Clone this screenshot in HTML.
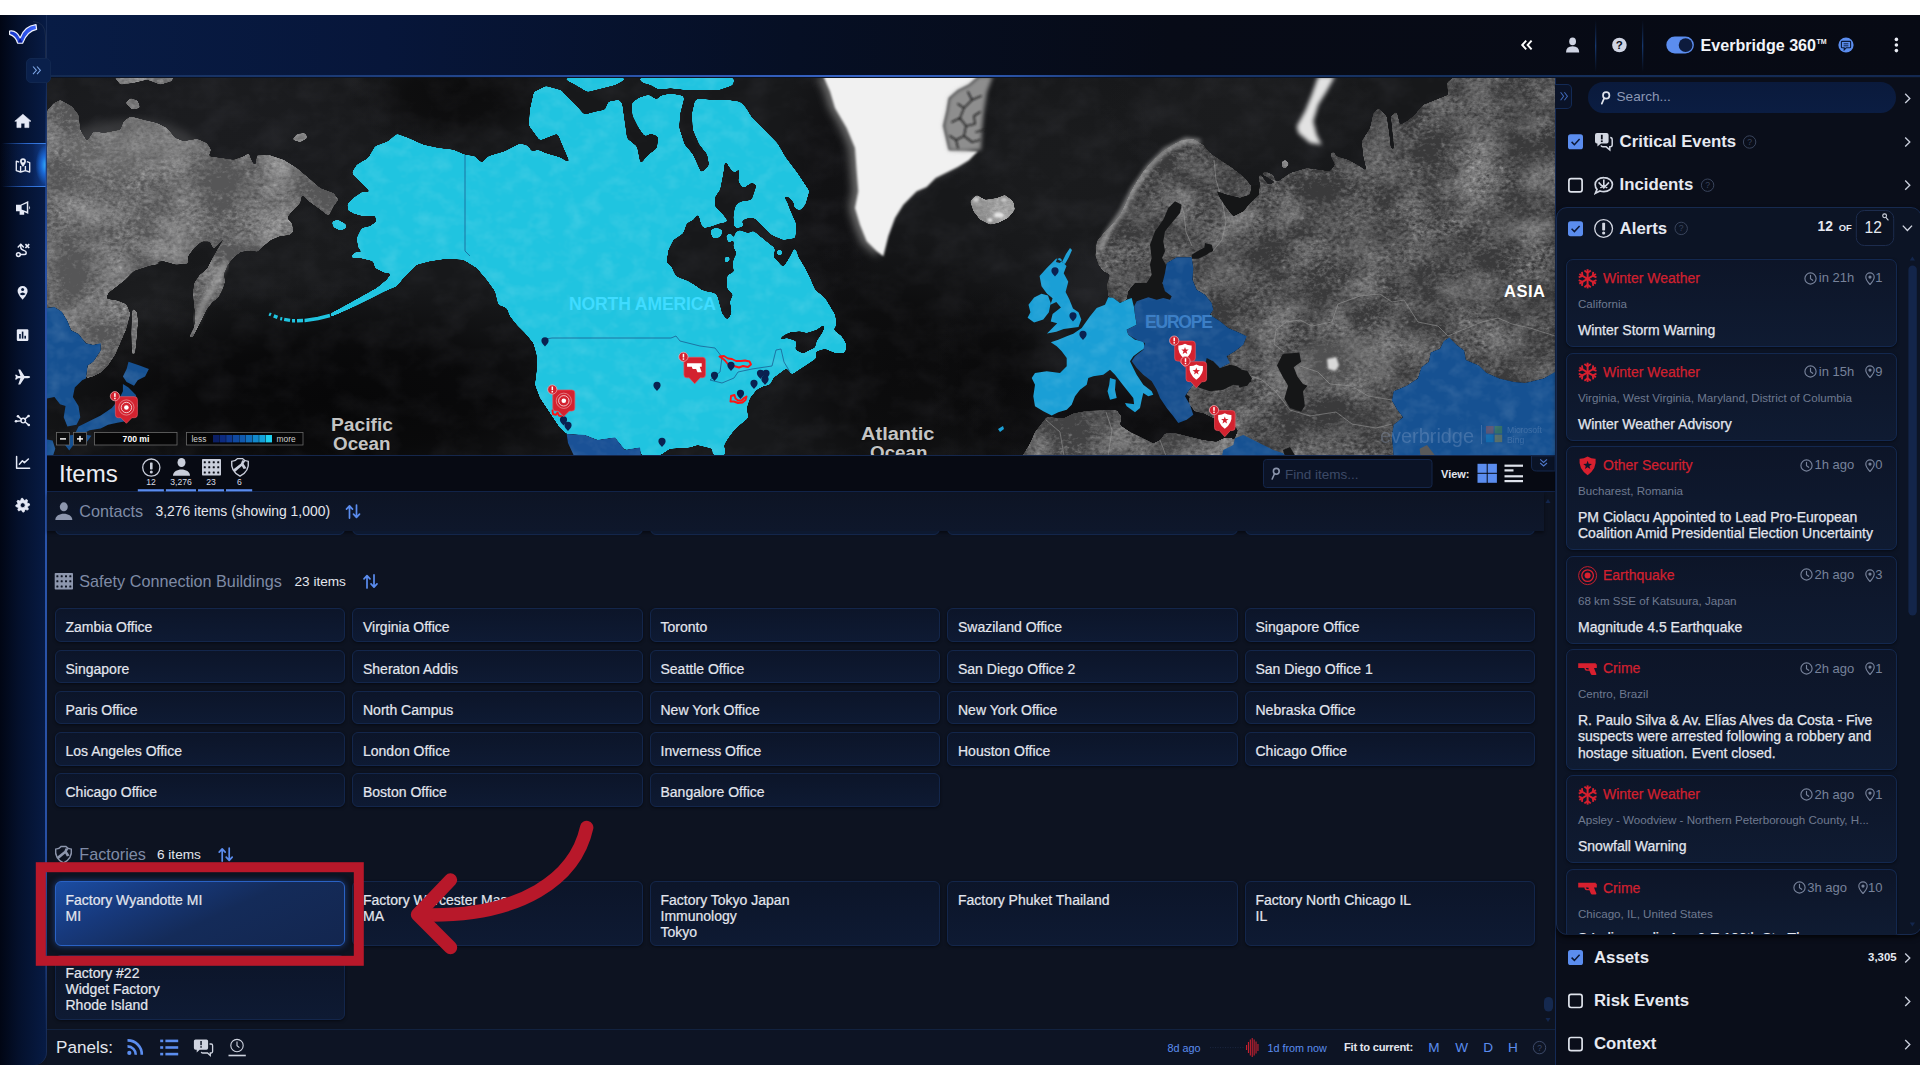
<!DOCTYPE html><html><head><meta charset="utf-8"><title>Everbridge 360</title><style>
*{box-sizing:border-box;margin:0;padding:0}
html,body{width:1920px;height:1080px;overflow:hidden;background:#fff}
body{font-family:"Liberation Sans",sans-serif;color:#e3e6ee;position:relative}
.abs{position:absolute}
#app{position:absolute;left:0;top:15px;width:1920px;height:1050px;background:#0d1321;overflow:hidden}
#side{position:absolute;left:0;top:0;width:46.5px;height:1050px;background:linear-gradient(90deg,#010614 0%,#04102b 40%,#071b44 100%);border-right:1px solid #182c55;border-bottom-right-radius:13px}
#side:after{content:'';position:absolute;right:-1px;top:70px;width:1.3px;height:950px;background:linear-gradient(180deg,rgba(40,80,170,0) 0%,#2850a4 18%,#2a54aa 50%,#2850a4 80%,rgba(40,80,170,0) 100%)}
#hdr{position:absolute;left:46px;top:0;width:1874px;height:62px;background:linear-gradient(90deg,#081c45 0%,#07163a 18%,#060f24 40%,#070b17 60%,#070a14 100%);border-bottom:none}
#map{position:absolute;left:47px;top:63px;width:1508px;height:377px;background:#161719;overflow:hidden}
#items{position:absolute;left:47px;top:440px;width:1508px;height:610px;background:#0d1321}
#rp{position:absolute;left:1555px;top:63px;width:365px;height:987px;background:#0a0e1a;border-left:1px solid #142a55}
.card{position:absolute;height:33.5px;width:290.5px;border:1px solid #13264b;border-radius:6px;background:linear-gradient(180deg,#0c1529 0%,#0e1a33 100%);box-shadow:0 1px 3px rgba(0,0,0,.5);font-size:14px;color:#e3e6ee;-webkit-text-stroke:.2px #e3e6ee;padding:2px 0 0 10px;line-height:33px;white-space:nowrap;overflow:hidden}
.card.f{height:65px;line-height:16px;padding-top:10.5px}
.sec{position:absolute;font-size:15.6px;color:#7f8ba6;white-space:nowrap}
.cnt{position:absolute;font-size:13.6px;color:#e3e6ee;white-space:nowrap}
.acard{position:absolute;left:10px;width:331px;border:1px solid #13284f;border-radius:7px;background:linear-gradient(180deg,#0d1528 0%,#0f1b32 100%);box-shadow:0 1px 3px rgba(0,0,0,.5)}
.acard .t{position:absolute;left:36px;top:10px;font-size:14px;color:#d0202f;-webkit-text-stroke:.25px #d0202f;white-space:nowrap}
.acard .m{position:absolute;right:13.5px;top:10.3px;font-size:13px;color:#77829a;white-space:nowrap}
.acard .l{position:absolute;left:11px;top:37px;font-size:11.6px;color:#6f7a90;white-space:nowrap}
.acard .d{position:absolute;left:11px;top:61.9px;font-size:14px;color:#e3e6ee;-webkit-text-stroke:.25px #e3e6ee;line-height:16.3px;width:310px}
.acard svg.ic{position:absolute;left:10px;top:9px}
.rrow{position:absolute;left:0;width:365px;height:30px}
.rrow .lab{position:absolute;left:64px;top:3px;font-size:17px;font-weight:bold;color:#e9ecf3;white-space:nowrap;letter-spacing:-0.1px}
.cb{position:absolute;left:12px;top:7px;width:15px;height:15px;border-radius:3px}
.cb.on{background:#5b8def}
.cb.off{border:2px solid #e3e6ee}
</style></head><body>
<div id="app">
<div id="map"><svg class="abs" style="left:0;top:0" width="1508" height="377" viewBox="47 78 1508 377">
<defs>
<filter id="fland" x="0" y="0" width="100%" height="100%" color-interpolation-filters="sRGB">
 <feGaussianBlur in="SourceGraphic" stdDeviation="1.3" result="sb"/>
 <feComponentTransfer in="sb" result="src"><feFuncA type="linear" slope="7" intercept="-3"/></feComponentTransfer>
 <feTurbulence type="fractalNoise" baseFrequency="0.02 0.025" numOctaves="3" seed="7" result="n1"/>
 <feTurbulence type="fractalNoise" baseFrequency="0.22 0.3" numOctaves="3" seed="4" result="n2"/>
 <feComposite in="n1" in2="n2" operator="arithmetic" k1="0" k2="0.6" k3="0.4" k4="0" result="n"/>
 <feColorMatrix in="n" type="matrix" values="0.75 0.75 0 0 -0.62  0.75 0.75 0 0 -0.62  0.75 0.75 0 0 -0.62  0 0 0 0 1" result="g"/>
 <feComposite in="g" in2="src" operator="in" result="gc"/>
 <feBlend in="gc" in2="src" mode="screen" result="b"/>
 <feComposite in="b" in2="src" operator="in"/>
</filter>
<filter id="fcy" x="0" y="0" width="100%" height="100%" color-interpolation-filters="sRGB">
 <feTurbulence type="fractalNoise" baseFrequency="0.06 0.07" numOctaves="3" seed="3" result="n"/>
 <feColorMatrix in="n" type="matrix" values="0 0 0 0 1  0 0 0 0 1  0 0 0 0 1  .15 .15 0 0 -0.13" result="g"/>
 <feComposite in="g" in2="SourceGraphic" operator="in" result="gc"/>
 <feMerge><feMergeNode in="SourceGraphic"/><feMergeNode in="gc"/></feMerge>
</filter>
<filter id="focean" x="0" y="0" width="100%" height="100%" color-interpolation-filters="sRGB">
 <feTurbulence type="fractalNoise" baseFrequency="0.03 0.04" numOctaves="4" seed="11" result="n"/>
 <feColorMatrix in="n" type="matrix" values="0 0 0 0 .6  0 0 0 0 .6  0 0 0 0 .66  .1 .1 0 0 -0.085"/>
</filter>
<filter id="goo" x="-2%" y="-2%" width="104%" height="104%" color-interpolation-filters="sRGB">
 <feGaussianBlur in="SourceGraphic" stdDeviation="1.5" result="bl"/>
 <feColorMatrix in="bl" type="matrix" values="1 0 0 0 0  0 1 0 0 0  0 0 1 0 0  0 0 0 14 -6.5" result="th"/>
 <feFlood flood-color="#20c4e0"/><feComposite in2="th" operator="in"/>
</filter>
<filter id="b1"><feGaussianBlur stdDeviation="1"/></filter>
<filter id="b2"><feGaussianBlur stdDeviation="2.2"/></filter>
<filter id="b4"><feGaussianBlur stdDeviation="4"/></filter>
<filter id="b12" x="-50%" y="-50%" width="200%" height="200%"><feGaussianBlur stdDeviation="14"/></filter>
<filter id="b25" x="-100%" y="-100%" width="300%" height="300%"><feGaussianBlur stdDeviation="22"/></filter>
</defs>
<rect x="47" y="78" width="1508" height="377" fill="#17181a"/>
<defs>
<radialGradient id="og0"><stop offset="0" stop-color="#1b1c1f" stop-opacity="1"/><stop offset=".45" stop-color="#1b1c1f" stop-opacity=".85"/><stop offset=".75" stop-color="#1b1c1f" stop-opacity=".35"/><stop offset="1" stop-color="#1b1c1f" stop-opacity="0"/></radialGradient>
<radialGradient id="og1"><stop offset="0" stop-color="#1a1b1d" stop-opacity="1"/><stop offset=".45" stop-color="#1a1b1d" stop-opacity=".85"/><stop offset=".75" stop-color="#1a1b1d" stop-opacity=".35"/><stop offset="1" stop-color="#1a1b1d" stop-opacity="0"/></radialGradient>
<radialGradient id="og2"><stop offset="0" stop-color="#1c1d1f" stop-opacity="1"/><stop offset=".45" stop-color="#1c1d1f" stop-opacity=".85"/><stop offset=".75" stop-color="#1c1d1f" stop-opacity=".35"/><stop offset="1" stop-color="#1c1d1f" stop-opacity="0"/></radialGradient>
<radialGradient id="og3"><stop offset="0" stop-color="#070708" stop-opacity="1"/><stop offset=".45" stop-color="#070708" stop-opacity=".85"/><stop offset=".75" stop-color="#070708" stop-opacity=".35"/><stop offset="1" stop-color="#070708" stop-opacity="0"/></radialGradient>
<radialGradient id="og4"><stop offset="0" stop-color="#0c0c0d" stop-opacity="1"/><stop offset=".45" stop-color="#0c0c0d" stop-opacity=".85"/><stop offset=".75" stop-color="#0c0c0d" stop-opacity=".35"/><stop offset="1" stop-color="#0c0c0d" stop-opacity="0"/></radialGradient>
<radialGradient id="og5"><stop offset="0" stop-color="#111113" stop-opacity="1"/><stop offset=".45" stop-color="#111113" stop-opacity=".85"/><stop offset=".75" stop-color="#111113" stop-opacity=".35"/><stop offset="1" stop-color="#111113" stop-opacity="0"/></radialGradient>
<radialGradient id="og6"><stop offset="0" stop-color="#0b0b0c" stop-opacity="1"/><stop offset=".45" stop-color="#0b0b0c" stop-opacity=".85"/><stop offset=".75" stop-color="#0b0b0c" stop-opacity=".35"/><stop offset="1" stop-color="#0b0b0c" stop-opacity="0"/></radialGradient>
<radialGradient id="og7"><stop offset="0" stop-color="#0a0a0b" stop-opacity="1"/><stop offset=".45" stop-color="#0a0a0b" stop-opacity=".85"/><stop offset=".75" stop-color="#0a0a0b" stop-opacity=".35"/><stop offset="1" stop-color="#0a0a0b" stop-opacity="0"/></radialGradient>
<radialGradient id="og8"><stop offset="0" stop-color="#1a1b1d" stop-opacity="1"/><stop offset=".45" stop-color="#1a1b1d" stop-opacity=".85"/><stop offset=".75" stop-color="#1a1b1d" stop-opacity=".35"/><stop offset="1" stop-color="#1a1b1d" stop-opacity="0"/></radialGradient>
<radialGradient id="og9"><stop offset="0" stop-color="#1b1c1e" stop-opacity="1"/><stop offset=".45" stop-color="#1b1c1e" stop-opacity=".85"/><stop offset=".75" stop-color="#1b1c1e" stop-opacity=".35"/><stop offset="1" stop-color="#1b1c1e" stop-opacity="0"/></radialGradient>
<radialGradient id="og10"><stop offset="0" stop-color="#202124" stop-opacity="1"/><stop offset=".45" stop-color="#202124" stop-opacity=".85"/><stop offset=".75" stop-color="#202124" stop-opacity=".35"/><stop offset="1" stop-color="#202124" stop-opacity="0"/></radialGradient>
<radialGradient id="og11"><stop offset="0" stop-color="#0d0d0f" stop-opacity="1"/><stop offset=".45" stop-color="#0d0d0f" stop-opacity=".85"/><stop offset=".75" stop-color="#0d0d0f" stop-opacity=".35"/><stop offset="1" stop-color="#0d0d0f" stop-opacity="0"/></radialGradient>
</defs>
<ellipse cx="190" cy="130" rx="264" ry="108" fill="url(#og0)"/>
<ellipse cx="280" cy="250" rx="93" ry="78" fill="url(#og1)"/>
<ellipse cx="150" cy="315" rx="70" ry="70" fill="url(#og2)"/>
<ellipse cx="330" cy="400" rx="356" ry="116" fill="url(#og3)"/>
<ellipse cx="455" cy="95" rx="108" ry="54" fill="url(#og4)"/>
<ellipse cx="830" cy="200" rx="54" ry="170" fill="url(#og5)"/>
<ellipse cx="900" cy="370" rx="147" ry="140" fill="url(#og6)"/>
<ellipse cx="1000" cy="390" rx="70" ry="108" fill="url(#og7)"/>
<ellipse cx="1060" cy="170" rx="108" ry="108" fill="url(#og8)"/>
<ellipse cx="1240" cy="115" rx="140" ry="70" fill="url(#og9)"/>
<ellipse cx="1090" cy="285" rx="34" ry="43" fill="url(#og10)"/>
<ellipse cx="1130" cy="420" rx="186" ry="46" fill="url(#og11)"/>
<rect x="47" y="78" width="1508" height="377" filter="url(#focean)" fill="#000" opacity="1"/>
<path d="M823.3 76.3 L830.0 91.3 L835.0 108.0 L846.7 128.0 L855.0 148.0 L856.7 171.3 L858.3 191.3 L855.0 208.0 L860.0 224.7 L866.7 241.3 L876.7 251.3 L883.3 256.3 L888.3 236.3 L895.0 218.0 L903.3 204.7 L916.7 191.3 L926.7 186.9 L935.6 178.0 L946.7 172.4 L957.8 166.9 L968.9 160.2 L977.8 151.3 L964.4 150.2 L948.9 150.2 L946.7 140.2 L943.3 125.8 L946.7 111.3 L948.9 98.0 L957.8 90.2 L968.9 84.7 L979.0 76.0 Z" fill="#6a6a6a" filter="url(#b4)" transform="translate(-6 0)"/>
<path d="M823.3 76.3 L830.0 91.3 L835.0 108.0 L846.7 128.0 L855.0 148.0 L856.7 171.3 L858.3 191.3 L855.0 208.0 L860.0 224.7 L866.7 241.3 L876.7 251.3 L883.3 256.3 L888.3 236.3 L895.0 218.0 L903.3 204.7 L916.7 191.3 L926.7 186.9 L935.6 178.0 L946.7 172.4 L957.8 166.9 L968.9 160.2 L977.8 151.3 L964.4 150.2 L948.9 150.2 L946.7 140.2 L943.3 125.8 L946.7 111.3 L948.9 98.0 L957.8 90.2 L968.9 84.7 L979.0 76.0 Z" fill="#f1f1f1" filter="url(#b1)"/>
<path d="M948.9 98.0 L957.8 90.2 L968.9 84.7 L979.0 76.0 L993.0 76.0 L987.0 92.0 L984.0 110.0 L982.0 130.0 L981.0 150.0 L964.0 151.0 L948.9 150.2 L946.7 140.2 L943.3 125.8 L946.7 111.3 Z" fill="#8e8e8e" filter="url(#b2)"/>
<g stroke="#151516" stroke-width="1.7" fill="none" filter="url(#b1)" opacity=".85" stroke-linecap="round"><path d="M981 96 L972 100 L964 108 L958 104 M972 100 L968 92 M964 108 L960 118 L952 122 M960 118 L966 126 L975 124 M966 126 L964 136 L956 140 L950 136 M964 136 L972 142 L980 140 M956 140 L958 148 M980 112 L974 116 L975 124 M984 130 L976 132"/></g>
<g filter="url(#fland)">
<path d="M1095.0 258.8 L1096.7 241.3 L1105.0 231.3 L1113.3 223.0 L1120.0 214.7 L1125.0 204.7 L1130.0 193.0 L1136.7 181.3 L1143.3 171.3 L1151.7 161.3 L1160.0 153.0 L1170.0 146.3 L1181.7 139.7 L1193.3 138.8 L1203.3 144.7 L1210.0 153.0 L1220.0 159.7 L1230.0 166.3 L1243.3 176.3 L1251.7 186.3 L1250.0 194.7 L1240.0 198.0 L1226.7 194.7 L1216.7 191.3 L1220.0 198.0 L1226.7 208.0 L1233.3 216.3 L1243.3 211.3 L1250.0 203.0 L1258.3 194.7 L1260.0 184.7 L1258.3 176.3 L1265.0 171.3 L1273.3 174.7 L1276.7 183.0 L1256.7 171.3 L1263.3 178.0 L1268.3 184.7 L1278.3 181.3 L1290.0 173.0 L1306.7 168.0 L1330.0 171.3 L1335.0 164.7 L1330.0 154.7 L1333.3 151.3 L1336.7 156.3 L1348.3 159.7 L1360.0 166.3 L1366.7 171.3 L1363.3 156.3 L1361.7 141.3 L1370.0 128.0 L1373.3 113.0 L1378.3 108.0 L1386.7 116.3 L1389.2 133.0 L1390.8 148.0 L1394.2 149.7 L1392.5 133.0 L1390.8 116.3 L1396.7 111.3 L1400.0 124.7 L1406.7 121.3 L1415.0 114.7 L1420.0 108.0 L1423.3 104.7 L1448.3 94.7 L1446.7 83.0 L1454.2 76.3 L1556.7 76.3 L1556.0 76.0 L1556.0 372.0 L1543.7 378.4 L1525.2 383.0 L1514.1 382.1 L1499.3 378.4 L1486.3 372.8 L1478.9 365.4 L1465.9 359.9 L1464.1 350.6 L1456.7 345.0 L1449.3 337.6 L1443.7 341.3 L1440.0 348.7 L1430.7 352.4 L1428.9 361.7 L1421.5 367.3 L1417.8 378.4 L1406.7 385.8 L1393.7 391.3 L1391.9 400.6 L1397.4 409.9 L1403.0 417.3 L1393.7 424.7 L1391.9 435.8 L1393.7 457.1 L1300.0 457.0 L1236.0 457.0 L1234.0 440.0 L1238.0 430.0 L1232.0 424.0 L1222.0 420.0 L1213.3 418.3 L1203.3 413.3 L1195.0 411.7 L1188.3 403.3 L1190.0 395.0 L1185.0 396.3 L1188.3 391.3 L1193.3 384.7 L1201.7 374.7 L1205.0 364.7 L1206.7 358.0 L1213.3 361.3 L1220.0 368.0 L1230.0 363.0 L1226.7 356.3 L1235.0 351.3 L1243.3 344.7 L1246.7 336.3 L1240.0 333.0 L1228.3 328.0 L1220.0 321.3 L1210.0 314.7 L1213.3 309.7 L1211.7 303.0 L1205.0 294.7 L1196.7 289.7 L1192.5 279.7 L1193.3 268.0 L1191.7 257.2 L1176.7 257.2 L1166.7 263.0 L1165.0 273.0 L1162.5 283.0 L1165.0 291.3 L1160.0 296.3 L1151.7 293.8 L1146.7 283.0 L1135.0 283.0 L1128.3 291.3 L1126.7 299.7 L1120.0 303.0 L1113.3 298.0 L1108.3 297.2 L1106.7 284.7 L1110.0 274.7 L1103.3 271.3 L1098.3 264.7 L1095.8 256.3 Z" fill="#3a3a3b"/>
<path d="M45.3 113.0 L53.7 103.0 L60.3 99.7 L72.0 106.3 L78.7 114.7 L80.3 129.7 L87.0 141.3 L93.7 131.3 L103.7 133.0 L120.3 129.7 L123.7 121.3 L130.3 116.3 L143.7 119.7 L157.0 123.0 L167.0 128.0 L175.3 138.0 L183.7 141.3 L197.0 138.8 L207.0 143.0 L211.2 149.7 L208.7 156.3 L222.0 158.0 L233.7 159.7 L243.7 156.3 L248.7 153.0 L252.0 161.3 L255.3 166.3 L257.0 154.7 L268.7 154.7 L283.7 159.7 L297.0 168.0 L308.7 178.0 L320.3 188.0 L333.7 193.0 L338.7 199.7 L333.7 206.3 L328.7 216.3 L320.3 209.7 L308.7 201.3 L302.0 194.7 L300.3 203.0 L292.0 211.3 L287.0 218.0 L292.0 223.0 L293.7 233.0 L293.9 231.1 L290.0 235.0 L279.7 236.3 L270.6 240.2 L262.8 246.7 L257.6 251.9 L251.1 250.6 L240.8 251.9 L234.3 257.1 L227.8 264.8 L223.9 273.9 L225.2 281.7 L222.6 289.5 L218.7 297.2 L212.2 302.4 L207.1 308.9 L201.9 319.3 L192.8 337.4 L188.9 337.4 L194.1 327.1 L195.4 316.7 L194.1 306.3 L192.8 293.4 L194.1 283.0 L199.3 275.2 L207.1 268.7 L210.9 260.9 L217.4 249.3 L222.6 241.5 L227.8 233.7 L223.9 237.6 L217.4 245.4 L213.5 249.3 L209.6 241.5 L201.9 241.5 L194.1 248.0 L187.6 257.1 L188.9 263.5 L175.9 264.8 L163.0 260.9 L150.0 262.2 L165.5 263.6 L150.7 265.4 L134.0 271.0 L124.8 280.2 L108.1 293.2 L106.3 298.7 L117.4 300.6 L126.6 304.3 L130.3 313.6 L126.6 328.4 L121.1 341.3 L115.5 354.3 L108.1 365.4 L100.7 372.8 L93.3 376.5 L85.9 378.4 L87.7 365.4 L93.3 361.7 L100.7 350.6 L100.7 343.2 L93.3 345.0 L85.9 343.2 L78.5 333.9 L71.1 330.2 L67.4 321.0 L61.8 311.7 L54.4 307.1 L45.1 308.0 Z" fill="#565657"/>
<path d="M1021.7 457.0 L1030.0 443.3 L1035.0 431.7 L1046.7 416.7 L1063.3 418.3 L1073.3 413.3 L1086.7 410.8 L1106.7 410.0 L1116.7 410.0 L1121.7 416.7 L1120.0 425.0 L1130.0 431.7 L1143.3 438.3 L1153.3 443.3 L1160.0 440.0 L1165.0 433.3 L1176.7 433.3 L1190.0 436.7 L1203.3 440.0 L1216.7 441.7 L1223.3 438.3 L1232.0 437.5 L1236.0 445.0 L1238.0 457.0 Z M1236.0 457.0 L1237.0 456.0 L1238.0 457.0 Z" fill="#424243"/>
<path d="M132.6 308.0 L136.8 311.7 L138.1 321.0 L136.8 337.6 L135.0 354.3 L131.8 354.3 L131.3 332.1 L131.8 315.4 Z M113.7 76.3 L120.3 84.7 L133.7 83.0 L147.0 79.7 L160.3 84.7 L172.0 81.3 L173.7 76.3 Z M125.3 103.0 L130.3 98.0 L137.8 100.5 L140.3 108.0 L132.0 109.7 Z M292.0 139.7 L297.0 133.8 L305.3 133.0 L307.8 138.0 L300.3 142.2 Z M1281.7 161.3 L1285.8 159.7 L1289.2 163.8 L1285.8 168.8 L1282.0 167.2 Z" fill="#6a6a6b"/>
<path d="M970.0 201.3 L976.7 194.7 L985.0 199.7 L996.7 198.0 L1005.0 194.7 L1013.3 201.3 L1015.0 209.7 L1008.3 218.0 L998.3 223.0 L990.0 224.7 L980.0 219.7 L973.3 211.3 Z" fill="#8a8a8a"/>
</g>
<g filter="url(#b1)" fill="#e6e6e6"><ellipse cx="999" cy="215" rx="5" ry="2.6"/><ellipse cx="990" cy="220" rx="2.5" ry="2"/><ellipse cx="976" cy="200" rx="3" ry="2.4" opacity=".7"/><ellipse cx="1004" cy="200" rx="3" ry="2" opacity=".6"/></g>
<ellipse cx="1345" cy="365" rx="50" ry="28" fill="#8a8a8a" opacity=".28" filter="url(#b4)"/>
<ellipse cx="130" cy="150" rx="70" ry="30" fill="#9a9a9a" opacity=".22" filter="url(#b4)"/>
<g fill="none" stroke="#9c9c9c" stroke-width="1" opacity=".55"><path d="M1276 330 L1286 322 L1300 320 L1312 326 L1332 322 L1338 304 L1360 296 L1380 294 L1392 302 L1404 300 L1418 322 L1438 326 L1448 336"/><path d="M1448 336 L1462 330 L1482 322 L1498 318 L1512 324 L1530 328 L1555 336"/><path d="M1276 330 L1274 344 L1284 352 M1300 366 L1318 372 L1330 384 L1352 386 L1368 396 L1392 400"/><path d="M1240 372 L1262 380 L1276 392 L1290 410 L1310 416 L1336 412 L1352 424 L1376 428 L1392 424"/><path d="M1180 200 L1184 214 L1186 232 L1192 246 M1214 160 L1216 180 L1222 200 L1226 222 L1222 240 L1212 252"/><path d="M1046 420 L1060 432 L1064 456 M1106 412 L1112 430 L1108 456 M1160 440 L1166 456"/></g>
<path d="M1318.3 76.3 L1335.0 76.3 L1326.7 91.3 L1318.3 104.7 L1313.3 121.3 L1316.7 134.7 L1321.7 144.7 L1310.0 143.0 L1298.3 133.0 L1296.7 126.3 L1305.0 111.3 L1311.7 94.7 Z" fill="#e2e2e2" filter="url(#b2)"/>
<path d="M1100 250 L1108 232 L1122 212 L1133 190 L1148 168 L1166 150 L1186 140 L1200 142" fill="none" stroke="#b9b9b9" stroke-width="5" filter="url(#b2)" opacity=".7"/>
<path d="M226 262 L216 282 L204 302 L196 322" fill="none" stroke="#a8a8a8" stroke-width="5" filter="url(#b2)" opacity=".7"/>
<path d="M1175.0 201.3 L1181.7 204.7 L1180.0 213.0 L1171.7 223.0 L1165.0 231.3 L1163.3 241.3 L1165.0 251.3 L1161.7 258.8 L1151.7 258.8 L1150.0 244.7 L1155.0 231.3 L1163.3 219.7 L1168.3 208.0 Z M1151.7 257.2 L1161.7 257.2 L1165.8 264.7 L1166.7 273.0 L1162.5 283.0 L1165.0 291.3 L1171.7 296.3 L1170.0 299.7 L1163.3 298.0 L1156.7 299.7 L1148.3 297.2 L1136.7 301.3 L1131.7 298.0 L1128.3 291.3 L1135.0 283.0 L1146.7 283.0 L1151.7 274.7 L1150.0 264.7 Z M1191.7 254.7 L1200.0 249.7 L1210.0 244.7 L1213.3 249.7 L1206.7 254.7 L1198.3 258.8 L1191.7 258.8 Z M1216.7 191.3 L1226.7 194.7 L1240.0 198.0 L1250.0 194.7 L1251.7 186.3 L1258.3 184.7 L1259.2 194.7 L1250.0 203.0 L1243.3 211.3 L1233.3 216.3 L1226.7 208.0 L1220.0 198.0 Z M1205.0 243.0 L1211.7 244.7 L1213.3 251.3 L1208.3 253.0 L1204.2 248.0 Z M1206.7 358.0 L1213.3 361.3 L1220.0 368.0 L1230.0 364.7 L1236.7 366.3 L1246.7 373.0 L1251.7 381.3 L1243.3 386.3 L1233.3 384.7 L1223.3 389.7 L1210.0 391.3 L1200.0 388.0 L1193.3 384.7 L1201.7 374.7 L1205.0 364.7 Z M1239.1 369.1 L1247.4 371.0 L1252.0 378.4 L1247.4 385.8 L1239.1 387.6 Z M1282.6 354.3 L1299.3 352.4 L1301.1 361.7 L1293.7 367.3 L1297.4 376.5 L1303.0 383.9 L1307.6 385.8 L1303.0 391.3 L1304.8 406.1 L1301.1 411.7 L1290.0 408.0 L1284.4 398.7 L1288.1 385.8 L1282.6 376.5 L1277.0 365.4 Z M1283.0 450.0 L1290.0 447.0 L1296.0 457.0 L1285.0 457.0 Z" fill="#151617"/>
<path d="M1327.0 358.9 L1336.3 357.1 L1339.1 365.4 L1335.4 371.0 L1328.0 369.1 Z" fill="#d8d8d8" filter="url(#b1)"/>
<mask id="namask" maskUnits="userSpaceOnUse" x="47" y="78" width="1508" height="377"><rect x="47" y="78" width="1508" height="377" fill="#fff"/>
<path d="M698.3 213.3 L693.3 220.0 L686.7 223.3 L683.3 233.3 L673.3 240.0 L668.3 250.0 L666.7 263.3 L673.3 266.7 L676.7 276.7 L690.0 281.7 L701.7 290.0 L715.0 293.3 L720.0 300.0 L721.7 313.3 L726.7 319.2 L730.0 311.7 L726.7 298.3 L727.5 290.8 L736.7 293.3 L740.8 281.7 L738.3 273.3 L733.3 270.0 L733.3 260.0 L736.7 253.3 L733.3 246.7 L735.0 233.3 L739.2 230.0 L748.3 233.3 L753.3 230.8 L766.7 241.7 L775.0 248.3 L773.3 256.7 L783.3 267.5 L790.0 256.7 L794.2 248.3 L797.5 246.7 L796.7 240.0 L793.3 238.3 L783.3 240.0 L771.7 235.0 L763.3 226.7 L755.0 218.3 L746.7 218.3 L740.0 221.7 L735.0 223.3 L733.3 218.3 L735.0 206.7 L740.0 201.7 L751.7 200.0 L756.7 185.0 L751.7 182.5 L743.3 188.3 L738.3 181.7 L740.0 166.7 L735.0 173.3 L730.0 168.3 L725.0 160.0 L723.3 173.3 L720.0 190.0 L715.0 196.7 L715.0 206.7 L723.3 215.0 L728.3 221.7 L720.0 223.3 L710.0 226.7 L703.3 228.3 L700.8 223.3 Z M666.7 256.3 L675.0 274.7 L688.3 281.3 L705.0 291.3 L716.7 293.0 L720.0 306.3 L723.3 314.7 L727.5 320.5 L731.7 313.0 L730.0 301.3 L733.3 294.7 L728.3 289.7 L726.7 279.7 L730.0 273.0 L725.0 266.3 L723.3 256.3 Z M776.7 341.3 L783.3 335.5 L790.0 332.2 L800.0 331.3 L806.7 333.0 L816.7 329.7 L825.0 323.8 L823.3 331.3 L816.7 341.3 L815.0 348.0 L810.0 349.7 L803.3 353.8 L795.0 349.7 L796.7 341.3 L786.7 338.0 Z M791.7 206.7 L786.7 201.7 L783.3 195.0 L789.2 197.5 L795.0 204.2 Z M564.6 79.0 L577.5 85.9 L587.4 91.9 L599.3 88.9 L615.1 85.1 L628.0 78.0 L628.6 76.0 L635.9 76.0 L638.9 79.0 L642.8 82.8 L650.8 85.1 L658.7 89.5 L670.6 88.3 L688.4 90.3 L718.1 90.3 L730.0 86.3 L735.0 83.9 L739.9 101.8 L726.1 99.8 L710.2 99.8 L698.3 98.8 L692.4 101.4 L686.4 100.2 L682.5 95.8 L670.6 93.5 L660.7 95.8 L656.7 99.8 L648.8 94.8 L638.9 97.8 L631.0 103.8 L623.0 104.7 L619.1 99.8 L608.2 101.8 L605.2 109.7 L595.3 111.7 L584.4 114.7 L573.5 102.8 L562.6 92.3 Z M622.0 102.8 L631.9 101.8 L632.5 115.6 L638.5 127.5 L644.8 136.5 L650.8 133.5 L658.3 136.5 L657.1 148.3 L647.8 155.3 L640.5 164.2 L636.9 146.4 L627.0 138.4 L624.6 121.6 Z M684.5 96.8 L695.4 98.8 L692.0 113.7 L692.8 129.5 L699.3 144.4 L707.2 154.3 L709.2 165.2 L701.3 173.1 L692.8 154.3 L684.5 144.4 L679.1 127.5 L680.1 113.7 Z" fill="#000"/>
<path d="M710.0 230.0 L716.7 227.5 L723.3 230.8 L720.0 237.5 L712.5 238.3 Z M725.8 235.0 L731.7 233.3 L733.3 240.0 L728.3 243.3 Z M733.3 222.5 L742.5 221.7 L743.3 226.7 L735.0 228.3 Z M724.2 257.5 L729.2 255.8 L730.0 260.8 L725.0 263.3 Z M727.5 275.0 L736.7 273.3 L740.0 281.7 L736.7 290.8 L727.5 290.0 L726.7 281.7 Z M776.7 250.0 L781.7 249.2 L782.5 255.0 L777.5 255.8 Z M728.3 274.7 L735.0 271.3 L740.8 278.0 L740.0 288.0 L734.2 293.8 L728.3 289.7 L727.0 281.3 Z" fill="#fff"/>
</mask>
<g filter="url(#fcy)"><g filter="url(#goo)"><g mask="url(#namask)">
<path d="M351.7 173.0 L356.7 164.7 L368.3 158.0 L375.0 146.3 L388.3 141.3 L396.7 133.8 L408.3 138.0 L423.3 144.7 L438.3 148.0 L453.3 149.7 L465.0 154.7 L475.0 156.3 L481.7 163.0 L488.3 156.3 L505.0 151.3 L520.0 143.4 L527.9 145.8 L531.9 151.7 L537.8 149.7 L545.8 153.3 L559.6 157.3 L570.5 163.6 L568.5 159.2 L562.6 145.4 L557.6 133.5 L539.8 140.4 L528.9 125.6 L529.9 109.7 L533.9 91.9 L545.8 85.9 L563.6 90.9 L564.6 79.0 L562.6 76.0 L734.4 76.0 L733.0 85.9 L738.0 99.8 L745.9 107.7 L751.8 117.6 L763.7 129.5 L777.6 143.4 L785.5 157.3 L797.4 173.1 L809.3 190.9 L805.3 204.8 L799.4 211.1 L791.4 204.8 L785.5 196.9 L789.5 208.8 L796.4 224.6 L795.4 236.5 L793.4 246.4 L795.0 246.7 L798.3 256.7 L805.0 268.0 L810.0 278.0 L815.0 289.7 L825.0 298.0 L830.0 306.3 L835.0 314.7 L836.7 324.7 L833.3 329.7 L841.7 336.3 L846.7 344.7 L845.0 353.0 L835.0 353.0 L825.0 348.8 L816.7 351.3 L815.0 353.0 L816.7 358.0 L806.7 364.7 L796.7 371.3 L791.7 374.7 L786.7 368.0 L780.0 373.0 L773.3 378.0 L770.0 384.7 L763.3 386.3 L756.7 389.7 L750.0 398.0 L746.7 408.0 L748.3 418.0 L740.0 424.7 L733.3 431.3 L728.3 438.0 L724.0 445.0 L726.0 456.0 L712.5 456.0 L712.5 448.7 L697.5 445.0 L690.0 447.5 L670.0 448.7 L659.0 456.0 L641.0 456.0 L640.0 447.5 L625.0 450.0 L615.0 437.5 L597.5 440.0 L585.0 435.0 L566.7 434.0 L560.0 428.0 L553.3 418.0 L546.7 408.0 L540.0 398.0 L535.0 384.7 L536.7 371.3 L536.7 354.7 L533.3 343.0 L525.0 333.0 L516.7 324.7 L510.0 316.3 L506.7 308.0 L498.3 304.7 L495.0 291.3 L486.7 279.7 L476.7 268.0 L463.3 259.7 L446.7 258.8 L430.0 261.3 L416.7 264.7 L405.0 276.3 L396.7 286.3 L385.0 291.3 L371.7 298.0 L355.0 306.3 L340.0 313.0 L330.0 317.2 L330.0 313.8 L346.7 304.7 L363.3 295.5 L376.7 288.0 L386.7 279.7 L391.7 273.0 L385.0 273.0 L375.0 268.0 L373.3 261.3 L360.0 258.0 L350.0 258.0 L355.0 252.0 L363.3 253.0 L358.3 248.0 L356.7 238.0 L361.7 228.0 L370.0 226.3 L376.7 221.3 L375.0 215.5 L363.3 216.3 L351.7 213.0 L346.7 204.7 L353.3 198.0 L363.3 191.3 L371.7 193.0 L363.3 184.7 Z M331.7 221.3 L338.3 219.7 L346.7 224.7 L345.8 228.8 L340.0 230.5 L333.3 227.2 Z M346.7 209.7 L348.7 208.3 L350.3 210.0 L348.7 211.7 Z" fill="#20c4e0"/>
</g></g></g>
<path d="M330.0 315.5 L318.0 318.5 L305.0 320.5 L292.0 320.8 L280.0 318.5 L268.0 313.5" fill="none" stroke="#20c4e0" stroke-width="3.4" stroke-dasharray="26 1.5 6 2 3 2 6 2 2 3 4 3 2 40"/>
<g filter="url(#fcy)">
<path d="M566.7 434.0 L585.0 435.0 L597.5 440.0 L615.0 437.5 L625.0 450.0 L640.0 447.5 L641.0 456.0 L574.0 456.0 L568.0 443.0 Z" fill="#1a5196"/>
<path d="M1056.3 258.5 L1047.0 267.8 L1039.6 276.1 L1041.5 286.3 L1047.0 293.7 L1052.6 298.3 L1050.4 304.8 L1056.3 302.0 L1060.9 307.6 L1052.6 314.1 L1050.7 321.5 L1057.2 323.3 L1047.0 333.5 L1056.3 331.7 L1063.7 328.9 L1078.5 327.0 L1081.3 319.6 L1078.5 312.2 L1073.0 308.5 L1069.3 299.3 L1065.6 291.9 L1068.3 281.7 L1063.7 273.3 L1066.5 265.9 L1062.8 262.2 Z M1056.0 262.0 L1057.0 259.0 L1060.0 258.0 L1062.0 260.0 L1060.0 263.0 Z M1062.0 262.0 L1066.0 254.0 L1070.0 248.0 L1072.0 250.0 L1069.0 257.0 L1065.0 264.0 Z M1041.5 293.7 L1034.1 297.4 L1028.5 304.8 L1030.4 312.2 L1027.6 317.8 L1034.1 322.4 L1043.3 319.6 L1048.9 312.2 L1050.7 303.0 L1048.0 295.6 Z M1050.8 342.2 L1058.3 339.7 L1066.7 336.3 L1073.3 333.8 L1081.7 328.0 L1090.0 316.3 L1096.7 308.0 L1105.0 304.7 L1108.3 297.2 L1113.3 298.0 L1120.0 303.0 L1126.7 299.7 L1131.7 298.0 L1134.2 308.0 L1135.0 314.7 L1136.7 324.7 L1126.7 329.7 L1128.3 334.7 L1135.0 339.7 L1143.3 341.3 L1145.0 348.0 L1140.0 351.3 L1133.3 356.3 L1130.0 361.3 L1133.3 368.0 L1136.7 374.7 L1143.3 384.7 L1151.7 391.3 L1153.3 394.7 L1148.3 396.3 L1143.3 393.0 L1141.7 399.7 L1140.0 408.0 L1135.0 411.3 L1133.3 398.0 L1126.7 389.7 L1120.0 381.3 L1115.0 374.7 L1110.0 369.7 L1103.3 374.7 L1093.3 376.3 L1088.3 378.0 L1086.7 384.7 L1080.0 389.7 L1075.0 396.3 L1071.7 404.7 L1066.7 409.7 L1058.3 412.2 L1051.7 415.5 L1043.3 411.3 L1035.0 406.3 L1033.3 396.3 L1035.0 384.7 L1031.7 378.0 L1035.0 373.0 L1046.7 371.3 L1060.0 373.0 L1066.7 366.3 L1066.7 358.0 L1061.7 351.3 L1056.7 346.3 Z M1110.0 378.0 L1115.8 379.7 L1115.0 389.7 L1116.7 398.0 L1110.0 399.7 L1107.5 391.3 L1109.2 384.7 Z M1125.0 403.0 L1138.3 404.7 L1140.0 408.0 L1135.0 412.2 L1126.7 406.3 Z M998.0 429.0 L1003.0 426.0 L1004.0 429.0 L1000.0 432.0 Z" fill="#1a9fd6"/>
<path d="M1166.7 263.0 L1176.7 257.2 L1191.7 257.2 L1193.3 268.0 L1192.5 279.7 L1196.7 289.7 L1205.0 294.7 L1211.7 303.0 L1213.3 309.7 L1210.0 314.7 L1220.0 321.3 L1228.3 328.0 L1240.0 333.0 L1246.7 336.3 L1243.3 344.7 L1235.0 351.3 L1226.7 356.3 L1230.0 363.0 L1220.0 368.0 L1213.3 361.3 L1206.7 358.0 L1205.0 364.7 L1201.7 374.7 L1193.3 384.7 L1188.3 391.3 L1185.0 396.3 L1190.0 404.7 L1193.3 414.7 L1186.7 419.7 L1178.3 423.0 L1173.3 416.3 L1166.7 408.0 L1160.0 398.0 L1156.7 389.7 L1151.7 381.3 L1143.3 374.7 L1136.7 368.0 L1131.7 361.3 L1135.0 356.3 L1143.3 349.7 L1145.0 343.0 L1136.7 339.7 L1128.3 334.7 L1126.7 329.7 L1136.7 324.7 L1135.0 314.7 L1134.2 306.3 L1136.7 301.3 L1148.3 297.2 L1156.7 299.7 L1163.3 298.0 L1170.0 299.7 L1171.7 296.3 L1165.0 291.3 L1162.5 283.0 L1165.0 273.0 Z" fill="#154e8e"/>
<path d="M1449.3 337.6 L1456.7 345.0 L1464.1 350.6 L1465.9 359.9 L1478.9 365.4 L1486.3 372.8 L1499.3 378.4 L1514.1 382.1 L1525.2 383.0 L1543.7 378.4 L1556.7 371.0 L1556.7 457.1 L1393.7 457.1 L1391.9 435.8 L1393.7 424.7 L1403.0 417.3 L1397.4 409.9 L1391.9 400.6 L1393.7 391.3 L1406.7 385.8 L1417.8 378.4 L1421.5 367.3 L1428.9 361.7 L1430.7 352.4 L1440.0 348.7 L1443.7 341.3 Z M1221.7 457.0 L1223.3 450.0 L1233.3 445.0 L1235.0 438.3 L1243.3 435.0 L1253.3 440.0 L1263.3 445.0 L1273.3 450.0 L1283.3 453.3 L1286.0 457.0 Z M46.1 308.0 L54.4 307.1 L61.8 311.7 L67.4 321.0 L71.1 330.2 L78.5 333.9 L85.9 343.2 L93.3 345.0 L100.7 343.2 L100.7 350.6 L93.3 361.7 L87.7 365.4 L85.9 378.4 L82.2 380.2 L74.8 387.6 L72.9 396.9 L78.5 406.1 L80.3 417.3 L76.6 424.7 L67.4 426.5 L63.7 417.3 L65.5 406.1 L60.0 404.3 L54.4 396.9 L46.1 398.7 Z M46.1 439.5 L52.6 440.4 L55.3 448.7 L52.6 457.1 L46.1 457.1 Z M128.5 361.7 L139.6 365.4 L148.9 369.1 L145.1 376.5 L137.7 380.2 L134.0 385.8 L126.6 382.1 L122.9 376.5 L126.6 369.1 Z M122.9 383.9 L128.5 387.6 L135.9 395.0 L137.7 406.1 L134.0 415.4 L126.6 421.0 L117.4 422.8 L108.1 424.7 L100.7 428.4 L89.6 430.2 L82.2 433.9 L74.8 433.9 L78.5 426.5 L89.6 421.0 L100.7 415.4 L111.8 408.0 L119.2 398.7 L122.9 391.3 Z M65.5 435.8 L82.2 433.9 L91.4 435.8 L85.9 443.2 L74.8 443.2 L69.2 450.6 L63.7 443.2 Z" fill="#165192"/>
</g>
<path d="M1420.6 457.1 L1419.6 448.7 L1427.0 445.0 L1436.3 457.1 Z" fill="#5a5a5a"/>
<g fill="none" stroke="#1a5f93" stroke-width=".8">
<path d="M465 155 V251 L470 256"/>
<path d="M545 339 L552 338 H671 L676 336 L680 341 L700 346 L715 348 L722 357 L720 372 L710 380 L722 383 L734 378 L738 372 L752 369 L772 366 L776 350 L781 349 L784 362 L790 372"/>
</g>
<g fill="none" stroke="#ff1414" stroke-width="1.9" stroke-linejoin="round" stroke-linecap="round">
<path d="M719.500 356.500 L724 356 L728 358.500 L732 359 L736 361 L741 361 L745 360.500 L749.500 361.500 L751 364.500 L748 367 L743 366 L739 367.500 L734 366 L730 366.500 L727 363 L724.500 360 Z"/>
<path d="M730.5 401.500 L731 396 L734.500 395 L735.500 398.500 L738 400.500 L741.500 400.500 L744 398 L746.500 396.500 L745.500 400 L742.500 402.500 L738 403 L734 401.500 Z"/>
<path d="M552.500 410.500 L553 414 L556 414.800 L557.500 412.500 L559 415.500 L562 416.500"/>
</g>
<text x="569" y="310" font-family="Liberation Sans, sans-serif" font-weight="bold" font-size="17.6" fill="#3fdcff" textLength="147">NORTH AMERICA</text>
<text x="1145" y="328" font-family="Liberation Sans, sans-serif" font-weight="bold" font-size="17.6" fill="#3c7fc6" textLength="68">EUROPE</text>
<text x="1504" y="297" font-family="Liberation Sans, sans-serif" font-weight="bold" font-size="16.5" fill="#ffffff" textLength="41">ASIA</text>
<g font-family="Liberation Sans, sans-serif" font-weight="bold" font-size="17.6" fill="#c4c4c4" stroke="#0a0a0a" stroke-width="1.2" paint-order="stroke" lengthAdjust="spacingAndGlyphs">
<text x="331" y="430.6" textLength="62" lengthAdjust="spacingAndGlyphs">Pacific</text><text x="333" y="450" textLength="57.500" lengthAdjust="spacingAndGlyphs">Ocean</text>
<text x="861" y="439.500" textLength="73.500" lengthAdjust="spacingAndGlyphs">Atlantic</text><text x="870" y="459" textLength="57.500" lengthAdjust="spacingAndGlyphs">Ocean</text>
</g>
<g opacity=".28"><text x="1380" y="443" font-family="Liberation Sans, sans-serif" font-size="20" fill="#9fb4d6" textLength="94" lengthAdjust="spacingAndGlyphs">everbridge</text><rect x="1481" y="425" width="1" height="19" fill="#9fb4d6"/>
<rect x="1486" y="426" width="7.6" height="7.6" fill="#f25022"/><rect x="1494.6" y="426" width="7.6" height="7.6" fill="#7fba00"/><rect x="1486" y="434.6" width="7.6" height="7.6" fill="#00a4ef"/><rect x="1494.6" y="434.6" width="7.6" height="7.6" fill="#ffb900"/>
<text x="1507" y="433" font-family="Liberation Sans, sans-serif" font-size="8.6" fill="#9fb4d6">Microsoft</text><text x="1507" y="443" font-family="Liberation Sans, sans-serif" font-size="8.6" fill="#9fb4d6">Bing</text></g>
<path d="M545 346.5 C543.8 344.5 541.4 343.1 541.4 340.9 A3.6 3.6 0 1 1 548.6 340.9 C548.6 343.1 546.2 344.5 545 346.5 Z" fill="#0a2150"/>
<path d="M563.5 425.5 C562.3 423.5 559.9 422.1 559.9 419.9 A3.6 3.6 0 1 1 567.1 419.9 C567.1 422.1 564.7 423.5 563.5 425.5 Z" fill="#0a2150"/>
<path d="M568 431 C566.8 429.0 564.4 427.6 564.4 425.4 A3.6 3.6 0 1 1 571.6 425.4 C571.6 427.6 569.2 429.0 568 431 Z" fill="#0a2150"/>
<path d="M657 391 C655.8 389.0 653.4 387.6 653.4 385.4 A3.6 3.6 0 1 1 660.6 385.4 C660.6 387.6 658.2 389.0 657 391 Z" fill="#0a2150"/>
<path d="M662 447 C660.8 445.0 658.4 443.6 658.4 441.4 A3.6 3.6 0 1 1 665.6 441.4 C665.6 443.6 663.2 445.0 662 447 Z" fill="#0a2150"/>
<path d="M714.5 381 C713.3 379.0 710.9 377.6 710.9 375.4 A3.6 3.6 0 1 1 718.1 375.4 C718.1 377.6 715.7 379.0 714.5 381 Z" fill="#0a2150"/>
<path d="M731 371 C729.8 369.0 727.4 367.6 727.4 365.4 A3.6 3.6 0 1 1 734.6 365.4 C734.6 367.6 732.2 369.0 731 371 Z" fill="#0a2150"/>
<path d="M740.5 399 C739.3 397.0 736.9 395.6 736.9 393.4 A3.6 3.6 0 1 1 744.1 393.4 C744.1 395.6 741.7 397.0 740.5 399 Z" fill="#0a2150"/>
<path d="M754 389 C752.8 387.0 750.4 385.6 750.4 383.4 A3.6 3.6 0 1 1 757.6 383.4 C757.6 385.6 755.2 387.0 754 389 Z" fill="#0a2150"/>
<path d="M760.5 379 C759.3 377.0 756.9 375.6 756.9 373.4 A3.6 3.6 0 1 1 764.1 373.4 C764.1 375.6 761.7 377.0 760.5 379 Z" fill="#0a2150"/>
<path d="M766 379 C764.8 377.0 762.4 375.6 762.4 373.4 A3.6 3.6 0 1 1 769.6 373.4 C769.6 375.6 767.2 377.0 766 379 Z" fill="#0a2150"/>
<path d="M765 385 C763.8 383.0 761.4 381.6 761.4 379.4 A3.6 3.6 0 1 1 768.6 379.4 C768.6 381.6 766.2 383.0 765 385 Z" fill="#0a2150"/>
<path d="M1055 276.5 C1053.8 274.5 1051.4 273.1 1051.4 270.9 A3.6 3.6 0 1 1 1058.6 270.9 C1058.6 273.1 1056.2 274.5 1055 276.5 Z" fill="#0a2150"/>
<path d="M1073 321.5 C1071.8 319.5 1069.4 318.1 1069.4 315.9 A3.6 3.6 0 1 1 1076.6 315.9 C1076.6 318.1 1074.2 319.5 1073 321.5 Z" fill="#0a2150"/>
<path d="M1083 340 C1081.8 338.0 1079.4 336.6 1079.4 334.4 A3.6 3.6 0 1 1 1086.6 334.4 C1086.6 336.6 1084.2 338.0 1083 340 Z" fill="#0a2150"/>
<path d="M118.4 396.7 H134.4 Q137.4 396.7 137.4 399.7 V414.7 Q137.4 417.7 134.4 417.7 H131.9 L126.4 423.3 L120.9 417.7 H118.4 Q115.4 417.7 115.4 414.7 V399.7 Q115.4 396.7 118.4 396.7 Z" fill="#d3222f" stroke="#e8525c" stroke-width=".7"/><circle cx="126.4" cy="407.5" r="7.6" fill="none" stroke="#fff" stroke-opacity=".55" stroke-width=".7"/><circle cx="126.4" cy="407.5" r="5.2" fill="none" stroke="#fff" stroke-opacity=".8" stroke-width=".9"/><circle cx="126.4" cy="407.5" r="2.3" fill="#fff"/><circle cx="114.9" cy="396.2" r="4.6" fill="#d3222f" stroke="#f3b6bb" stroke-width=".7"/><rect x="114.15" y="393.2" width="1.5" height="3.7" fill="#fff"/><rect x="114.15" y="397.7" width="1.5" height="1.5" fill="#fff"/>
<path d="M555.8 390.0 H571.8 Q574.8 390.0 574.8 393.0 V408.0 Q574.8 411.0 571.8 411.0 H569.3 L563.8 416.6 L558.3 411.0 H555.8 Q552.8 411.0 552.8 408.0 V393.0 Q552.8 390.0 555.8 390.0 Z" fill="#d3222f" stroke="#e8525c" stroke-width=".7"/><circle cx="563.8" cy="400.8" r="7.6" fill="none" stroke="#fff" stroke-opacity=".55" stroke-width=".7"/><circle cx="563.8" cy="400.8" r="5.2" fill="none" stroke="#fff" stroke-opacity=".8" stroke-width=".9"/><circle cx="563.8" cy="400.8" r="2.3" fill="#fff"/><circle cx="552.3" cy="389.5" r="4.6" fill="#d3222f" stroke="#f3b6bb" stroke-width=".7"/><rect x="551.55" y="386.5" width="1.5" height="3.7" fill="#fff"/><rect x="551.55" y="391.0" width="1.5" height="1.5" fill="#fff"/>
<path d="M686.95 357.3 H702.45 Q705.45 357.3 705.45 360.3 V374.8 Q705.45 377.8 702.45 377.8 H700.2 L694.7 383.8 L689.2 377.8 H686.95 Q683.95 377.8 683.95 374.8 V360.3 Q683.95 357.3 686.95 357.3 Z" fill="#d3222f" stroke="#e8525c" stroke-width=".7"/><path d="M687.1 363.25 H701.7 V366.85 H699.7 L701.7 372.25 H697.5 L696.1 369.05 H693.1 Q692.1 369.05 691.9 366.85 H687.1 Z" fill="#fff"/><circle cx="683.45" cy="356.8" r="4.6" fill="#d3222f" stroke="#f3b6bb" stroke-width=".7"/><rect x="682.7" y="353.8" width="1.5" height="3.7" fill="#fff"/><rect x="682.7" y="358.3" width="1.5" height="1.5" fill="#fff"/>
<path d="M1177.7 341.09999999999997 H1192.3 Q1195.3 341.09999999999997 1195.3 344.09999999999997 V358.09999999999997 Q1195.3 361.09999999999997 1192.3 361.09999999999997 H1190.5 L1185 367.2 L1179.5 361.09999999999997 H1177.7 Q1174.7 361.09999999999997 1174.7 358.09999999999997 V344.09999999999997 Q1174.7 341.09999999999997 1177.7 341.09999999999997 Z" fill="#d3222f" stroke="#e8525c" stroke-width=".7"/><path d="M1178.3999999999999 345.4 Q1181.8 345.59999999999997 1185.0 343.79999999999995 Q1188.2 345.59999999999997 1191.6 345.4 Q1192.8 353.4 1185.0 359.19999999999993 Q1177.2 353.4 1178.3999999999999 345.4 Z" fill="#fff"/><path d="M1185.00 346.90 L1185.94 349.51 L1188.71 349.59 L1186.52 351.29 L1187.29 353.96 L1185.00 352.40 L1182.71 353.96 L1183.48 351.29 L1181.29 349.59 L1184.06 349.51 Z" fill="#d3222f"/><circle cx="1174.2" cy="340.59999999999997" r="4.6" fill="#d3222f" stroke="#f3b6bb" stroke-width=".7"/><rect x="1173.45" y="337.59999999999997" width="1.5" height="3.7" fill="#fff"/><rect x="1173.45" y="342.09999999999997" width="1.5" height="1.5" fill="#fff"/>
<path d="M1189.0 361.7 H1203.6 Q1206.6 361.7 1206.6 364.7 V378.7 Q1206.6 381.7 1203.6 381.7 H1201.8 L1196.3 387.8 L1190.8 381.7 H1189.0 Q1186.0 381.7 1186.0 378.7 V364.7 Q1186.0 361.7 1189.0 361.7 Z" fill="#d3222f" stroke="#e8525c" stroke-width=".7"/><path d="M1189.6999999999998 366.0 Q1193.1 366.2 1196.3 364.4 Q1199.5 366.2 1202.8999999999999 366.0 Q1204.1 374.0 1196.3 379.79999999999995 Q1188.5 374.0 1189.6999999999998 366.0 Z" fill="#fff"/><path d="M1196.30 367.50 L1197.24 370.11 L1200.01 370.19 L1197.82 371.89 L1198.59 374.56 L1196.30 373.00 L1194.01 374.56 L1194.78 371.89 L1192.59 370.19 L1195.36 370.11 Z" fill="#d3222f"/><circle cx="1185.5" cy="361.2" r="4.6" fill="#d3222f" stroke="#f3b6bb" stroke-width=".7"/><rect x="1184.75" y="358.2" width="1.5" height="3.7" fill="#fff"/><rect x="1184.75" y="362.7" width="1.5" height="1.5" fill="#fff"/>
<path d="M1217.5 410.59999999999997 H1232.1 Q1235.1 410.59999999999997 1235.1 413.59999999999997 V427.59999999999997 Q1235.1 430.59999999999997 1232.1 430.59999999999997 H1230.3 L1224.8 436.7 L1219.3 430.59999999999997 H1217.5 Q1214.5 430.59999999999997 1214.5 427.59999999999997 V413.59999999999997 Q1214.5 410.59999999999997 1217.5 410.59999999999997 Z" fill="#d3222f" stroke="#e8525c" stroke-width=".7"/><path d="M1218.1999999999998 414.9 Q1221.6 415.09999999999997 1224.8 413.29999999999995 Q1228.0 415.09999999999997 1231.3999999999999 414.9 Q1232.6 422.9 1224.8 428.69999999999993 Q1217.0 422.9 1218.1999999999998 414.9 Z" fill="#fff"/><path d="M1224.80 416.40 L1225.74 419.01 L1228.51 419.09 L1226.32 420.79 L1227.09 423.46 L1224.80 421.90 L1222.51 423.46 L1223.28 420.79 L1221.09 419.09 L1223.86 419.01 Z" fill="#d3222f"/><circle cx="1214.0" cy="410.09999999999997" r="4.6" fill="#d3222f" stroke="#f3b6bb" stroke-width=".7"/><rect x="1213.25" y="407.09999999999997" width="1.5" height="3.7" fill="#fff"/><rect x="1213.25" y="411.59999999999997" width="1.5" height="1.5" fill="#fff"/>
<g font-family="Liberation Sans, sans-serif" font-size="9" font-weight="bold" fill="#ffffff">
<rect x="56.5" y="432.500" width="13" height="12.5" fill="#0b0b0c" stroke="#6a6a6a" stroke-width=".8"/><rect x="60" y="438.2" width="6" height="1.4" fill="#fff"/>
<rect x="73.500" y="432.500" width="13" height="12.5" fill="#0b0b0c" stroke="#6a6a6a" stroke-width=".8"/><rect x="77" y="438.2" width="6" height="1.400" fill="#fff"/><rect x="79.3" y="435.9" width="1.4" height="6" fill="#fff"/>
<rect x="94.500" y="432.500" width="82.5" height="12.5" fill="#060607" stroke="#6a6a6a" stroke-width=".8"/><text x="136" y="442" text-anchor="middle" font-size="8.6">700 mi</text>
<rect x="186.500" y="432.500" width="116.500" height="12.5" fill="#060607" stroke="#6a6a6a" stroke-width=".8"/>
<text x="191.5" y="441.800" font-size="8.400" font-weight="normal" fill="#d0d0d0">less</text><text x="276.500" y="441.800" font-size="8.400" font-weight="normal" fill="#d0d0d0">more</text>
<rect x="213.0" y="435" width="6.2" height="7.4" fill="#0b1f66"/>
<rect x="219.6" y="435" width="6.2" height="7.4" fill="#0d2b80"/>
<rect x="226.2" y="435" width="6.2" height="7.4" fill="#0f3a92"/>
<rect x="232.8" y="435" width="6.2" height="7.4" fill="#1049a0"/>
<rect x="239.4" y="435" width="6.2" height="7.4" fill="#115aae"/>
<rect x="246.0" y="435" width="6.2" height="7.4" fill="#1270bd"/>
<rect x="252.6" y="435" width="6.2" height="7.4" fill="#1389cc"/>
<rect x="259.2" y="435" width="6.2" height="7.4" fill="#14a2da"/>
<rect x="265.8" y="435" width="6.2" height="7.4" fill="#1fd0f0"/>
</g>
</svg></div>
<div id="hdr"><div class="abs" style="left:0;bottom:0;width:1874px;height:1.6px;background:linear-gradient(90deg,#13294f 0%,#1b3a74 15%,#2b55ac 32%,#3864c6 44%,#2d58b0 50%,#1a3870 58%,#15305c 75%,#132850 100%)"></div>
<svg class="abs" style="left:0;top:0" width="1874" height="62" viewBox="46 15 1874 62">
<defs><linearGradient id="sepg" x1="0" y1="0" x2="0" y2="1"><stop offset="0" stop-color="#12305f" stop-opacity="0"/><stop offset=".5" stop-color="#16386f"/><stop offset="1" stop-color="#12305f" stop-opacity="0"/></linearGradient></defs>
<g fill="none" stroke="#ffffff" stroke-width="1.9" stroke-linejoin="miter"><path d="M1526.2 40.6 L1522.2 45 L1526.2 49.4 M1531.6 40.6 L1527.6 45 L1531.6 49.4"/></g>
<ellipse cx="1572.6" cy="41.4" rx="3.4" ry="3.8" fill="#cfd4e3"/><path d="M1566 52.6 q0 -6.4 6.6 -6.4 q6.6 0 6.6 6.4 Z" fill="#cfd4e3"/>
<rect x="1595" y="20" width="1.3" height="52" fill="url(#sepg)"/><rect x="1642" y="20" width="1.3" height="52" fill="url(#sepg)"/>
<circle cx="1619.4" cy="45" r="7.3" fill="#cfd4e3"/>
<rect x="1666.3" y="36.6" width="27.6" height="17" rx="8.5" fill="#5b8def"/><circle cx="1685.6" cy="45.1" r="6.9" fill="#0d1b3d"/>
<circle cx="1846" cy="45" r="7.6" fill="#5b8def"/><path d="M1842.2 41.4 h7.6 q.8 0 .8 .8 v4.8 q0 .8 -.8 .8 h-3.6 l-2 2 v-2 h-2 q-.8 0 -.8 -.8 v-4.8 q0 -.8 .8 -.8 Z" fill="none" stroke="#0b1a3a" stroke-width="1.1"/><path d="M1843.6 43.8 h4.8 M1843.6 45.8 h4.8" stroke="#0b1a3a" stroke-width=".9"/>
<circle cx="1896.4" cy="39.4" r="1.8" fill="#e9ecf4"/>
<circle cx="1896.4" cy="45" r="1.8" fill="#e9ecf4"/>
<circle cx="1896.4" cy="50.6" r="1.8" fill="#e9ecf4"/>
</svg>
<div class="abs" style="left:1568.2px;top:24.4px;font-size:11.5px;font-weight:bold;line-height:12px;color:#0a0d18;width:10px;text-align:center">?</div>
<div class="abs" style="left:1654.6px;top:17.4px;font-size:16.1px;font-weight:bold;line-height:19px;color:#f2f4f9;white-space:nowrap">Everbridge 360<span style="font-size:7px;vertical-align:7px;margin-left:.5px">TM</span></div>
</div>
<div id="side">
<div class="abs" style="left:0;top:128px;width:46px;height:44px;background:linear-gradient(90deg,rgba(8,30,80,0) 0%,rgba(12,44,110,.55) 70%,rgba(20,70,160,.8) 100%)"></div>
<div class="abs" style="left:2px;top:128px;width:44px;height:1.4px;background:linear-gradient(90deg,rgba(40,90,190,0),#2d6ad0 60%,#3b82e8)"></div>
<div class="abs" style="left:2px;top:171px;width:44px;height:1.4px;background:linear-gradient(90deg,rgba(40,90,190,0),#2d6ad0 60%,#3b82e8)"></div>
<div class="abs" style="left:36px;top:131px;width:10px;height:38px;background:radial-gradient(ellipse at 100% 50%,#35b2ff 0%,rgba(30,120,240,.75) 35%,rgba(20,80,200,0) 75%)"></div>
<svg class="abs" style="left:0;top:0" width="60" height="1050" viewBox="0 15 60 1050">
<defs><linearGradient id="lg1" x1="0" y1="0" x2="1" y2="0"><stop offset="0" stop-color="#1535c9"/><stop offset="1" stop-color="#3f68ff"/></linearGradient></defs>
<path d="M9.6 31 C14 30.2 18 33 20.2 38 C22.5 31 28 25.5 36 24.6 L36.6 29.4 C30 30.5 25.5 35.5 22.6 43.2 L17.6 43.2 C16.4 38.5 13.8 35.6 9.6 34.4 Z" fill="url(#lg1)" stroke="#eef1fb" stroke-width="1.2" stroke-linejoin="round"/>
<path d="M20.2 38 L22.3 42.6 L18 42.6 Z" fill="#0a1a8a"/>
<path d="M33 21.5 Q45.5 22 45.5 36 V58" fill="none" stroke="#1a2a4a" stroke-width="1"/>
<path d="M22.9 114.2 L31 121.2 L28.9 121.2 L28.9 127.6 L24.8 127.6 L24.8 123.2 L21 123.2 L21 127.6 L16.9 127.6 L16.9 121.2 L14.8 121.2 Z" fill="#e6eaf6" stroke="#e6eaf6" stroke-width=".6" stroke-linejoin="round"/>
<g fill="none" stroke="#e6eaf6" stroke-width="1.35" stroke-linejoin="round"><path d="M19.2 162.2 L16.3 161.2 V170.6 L20.6 172 L25.4 170.6 L29.7 172 V162.6 L26.8 161.7"/><path d="M20.6 166 V172 M25.4 166 V170.6"/></g>
<path d="M23 158.2 a3 3 0 0 1 3 3 c0 2.2 -3 5.6 -3 5.6 s-3 -3.4 -3 -5.6 a3 3 0 0 1 3 -3 Z M23 160 a1.2 1.2 0 1 0 .01 0 Z" fill="#e6eaf6" fill-rule="evenodd"/>
<path d="M16 204.8 H20.5 L28.3 201 V214 L24.2 212 V214.8 H19.6 V211.3 H16 Z M29.2 205.6 q1.6 2 0 4 Z" fill="#e6eaf6"/><path d="M21.6 205.6 L26.8 203.2 V211.6 L21.6 209.6 Z" fill="#061737"/>
<g fill="none" stroke="#e6eaf6" stroke-width="1.5" stroke-linecap="round" stroke-linejoin="round"><circle cx="18.4" cy="254.6" r="1.9"/><path d="M20.6 254.6 H24.4 q1.8 0 1.8 -1.8 q0 -1.6 -2 -2.2 q-3.4 -1 -3.4 -3 V244.6"/><path d="M18.2 247 L20.8 244.3 L23.4 247"/></g>
<path d="M25.4 244.2 L29.2 248 M29.2 244.2 L25.4 248" stroke="#e6eaf6" stroke-width="1.7"/>
<path d="M22.6 286 a5 5 0 0 1 5 5 c0 3.6 -5 8.6 -5 8.6 s-5 -5 -5 -8.6 a5 5 0 0 1 5 -5 Z" fill="#e6eaf6"/><circle cx="22.6" cy="289.6" r="1.5" fill="#061737"/><path d="M19.7 294.1 q2.9 -3 5.8 0 q-2.9 2.4 -5.8 0Z" fill="#061737"/>
<rect x="16.8" y="329.3" width="11.6" height="11.6" rx="1.2" fill="#e6eaf6"/><g fill="#061737"><rect x="19.2" y="334" width="1.6" height="4.6"/><rect x="21.8" y="331.6" width="1.6" height="7"/><rect x="24.4" y="335.8" width="1.6" height="2.8"/></g>
<path d="M15 375.8 L16.6 375.8 L18 377 H20.4 L18.2 370.6 H20.2 L24.4 377 H28 q2.2 0 2.2 1.1 q0 1.1 -2.2 1.1 H24.4 L20.2 385.6 H18.2 L20.4 379.2 H18 L16.6 380.4 H15 L15.9 378.1 Z" fill="#e6eaf6" transform="translate(0 -1)"/>
<g fill="none" stroke="#e6eaf6" stroke-width="1.4" stroke-linecap="round"><circle cx="23.2" cy="420.6" r="2.3"/><path d="M21.4 419.2 L18.4 416.6 M25 419 L28 416.4 M25.2 422 L28.2 424.6 M21 420.9 L16.4 421.2"/></g><g fill="#e6eaf6"><circle cx="18" cy="416.2" r="1.3"/><circle cx="28.6" cy="416" r="1.3"/><circle cx="28.8" cy="425" r="1.3"/><circle cx="16" cy="421.2" r="1.3"/></g>
<g fill="none" stroke="#e6eaf6" stroke-width="1.5" stroke-linecap="round" stroke-linejoin="round"><path d="M16.6 456.4 V468.2 H29.6"/><path d="M19.4 464.2 L22.4 460.8 L24.4 462.6 L28.4 459"/></g>
<path d="M29.47 503.85 L29.60 505.20 L27.80 506.21 L27.50 507.19 L28.44 509.03 L27.58 510.08 L25.59 509.52 L24.69 510.00 L24.05 511.97 L22.70 512.10 L21.69 510.30 L20.71 510.00 L18.87 510.94 L17.82 510.08 L18.38 508.09 L17.90 507.19 L15.93 506.55 L15.80 505.20 L17.60 504.19 L17.90 503.21 L16.96 501.37 L17.82 500.32 L19.81 500.88 L20.71 500.40 L21.35 498.43 L22.70 498.30 L23.71 500.10 L24.69 500.40 L26.53 499.46 L27.58 500.32 L27.02 502.31 L27.50 503.21 Z M25.2 505.2 a2.5 2.5 0 1 0 -5 0 a2.5 2.5 0 1 0 5 0 Z" fill="#e6eaf6" fill-rule="evenodd" stroke="#e6eaf6" stroke-width=".8" stroke-linejoin="round"/>
</svg>
<div class="abs" style="left:26px;top:43px;width:24.5px;height:24.5px;border-radius:5px;background:#0a204b;border:1px solid #11274f;z-index:5"></div>
<svg class="abs" style="left:26px;top:43px;z-index:6" width="25" height="25" viewBox="26 58 25 25"><g fill="none" stroke="#7ea6e6" stroke-width="1.05"><path d="M33 66.5 L36.4 70.3 L33 74.2 M37 66.5 L40.4 70.3 L37 74.2"/></g></svg>
</div>
<div id="items">
<div class="abs" style="left:0;top:0;width:1508px;height:37px;background:#070a13;border-top:1.5px solid #15274c;border-bottom:1px solid #12244a"></div>
<div class="abs" style="left:12px;top:5px;font-size:24px;line-height:28px;color:#eceef4">Items</div>
<svg class="abs" style="left:0;top:0" width="1508" height="40" viewBox="47 455 1508 40">
<g fill="none" stroke="#c9cedb" stroke-width="1.3"><circle cx="151.3" cy="467.6" r="8.6"/></g><rect x="150.0" y="462.40000000000003" width="2.6" height="7" rx=".6" fill="#c9cedb"/><circle cx="151.3" cy="471.90000000000003" r="1.5" fill="#c9cedb"/>
<ellipse cx="181.5" cy="462.495" rx="3.9949999999999997" ry="4.4744" fill="#c9cedb"/><path d="M173.0 475.7 C173.0 467.3 190.0 467.3 190.0 475.7 Z" fill="#c9cedb"/>
<rect x="202" y="459" width="19" height="16.6" rx=".8" fill="#c9cedb"/><rect x="203.78" y="461.18" width="2" height="2" rx=".5" fill="#0a0d17"/><rect x="203.78" y="466.30" width="2" height="2" rx=".5" fill="#0a0d17"/><rect x="203.78" y="471.42" width="2" height="2" rx=".5" fill="#0a0d17"/><rect x="208.26" y="461.18" width="2" height="2" rx=".5" fill="#0a0d17"/><rect x="208.26" y="466.30" width="2" height="2" rx=".5" fill="#0a0d17"/><rect x="208.26" y="471.42" width="2" height="2" rx=".5" fill="#0a0d17"/><rect x="212.74" y="461.18" width="2" height="2" rx=".5" fill="#0a0d17"/><rect x="212.74" y="466.30" width="2" height="2" rx=".5" fill="#0a0d17"/><rect x="212.74" y="471.42" width="2" height="2" rx=".5" fill="#0a0d17"/><rect x="217.22" y="461.18" width="2" height="2" rx=".5" fill="#0a0d17"/><rect x="217.22" y="466.30" width="2" height="2" rx=".5" fill="#0a0d17"/><rect x="217.22" y="471.42" width="2" height="2" rx=".5" fill="#0a0d17"/>
<path d="M240.0 476.1 C232.8 472.6 231 467.35 231.72 461.40000000000003 C234.6 461.225 236.4 460.0 237.48 458.6 L242.52 458.6 C243.6 460.0 245.4 461.225 248.28 461.40000000000003 C249 467.35 247.2 472.6 240.0 476.1 Z" fill="none" stroke="#c9cedb" stroke-width="1.4"/><path d="M233.16 469.45000000000005 L240.9 463.5 L242.16 460.35 L245.4 460.70000000000005 L243.6 463.85 L246.48 468.225 L243.6 469.1 L241.8 465.95000000000005 L234.6 472.25 Z" fill="#c9cedb"/>
<rect x="137.8" y="489.2" width="26.1" height="2.2" fill="#5b8def"/>
<rect x="165.9" y="489.2" width="30.1" height="2.2" fill="#5b8def"/>
<rect x="198" y="489.2" width="26.0" height="2.2" fill="#5b8def"/>
<rect x="226" y="489.2" width="26.2" height="2.2" fill="#5b8def"/>
<rect x="1263.5" y="459.5" width="168.5" height="28" rx="3" fill="#0b1326" stroke="#14264a"/>
<g stroke="#8a94ab" stroke-width="1.6" fill="none"><circle cx="1276.3" cy="471.3" r="2.9"/><path d="M1274.4 474 L1272.2 479" stroke-linecap="round"/></g>
<rect x="1477.5" y="463.8" width="9.2" height="9" fill="#5b8def"/>
<rect x="1477.5" y="473.8" width="9.2" height="9" fill="#5b8def"/>
<rect x="1487.7" y="463.8" width="9.2" height="9" fill="#5b8def"/>
<rect x="1487.7" y="473.8" width="9.2" height="9" fill="#5b8def"/>
<rect x="1504.5" y="464.6" width="18.5" height="2.2" fill="#dfe3ec"/>
<rect x="1504.5" y="469.3" width="9" height="2.2" fill="#dfe3ec"/>
<rect x="1504.5" y="475.2" width="18.5" height="2.2" fill="#dfe3ec"/>
<rect x="1504.5" y="480.0" width="18.5" height="2.2" fill="#dfe3ec"/>
<path d="M1531.5 455.8 V466 Q1531.5 471 1536.5 471 H1555 V455.8 Z" fill="#0a1326" stroke="#15284e"/>
<g stroke="#4f78c9" stroke-width="1.1" fill="none"><path d="M1540.2 459.4 L1543.6 462.4 L1547 459.4 M1540.2 463 L1543.6 466 L1547 463"/></g>
</svg>
<div class="abs" style="left:84px;top:22px;width:40px;text-align:center;font-size:8.6px;line-height:10px;color:#d9dde6">12</div>
<div class="abs" style="left:114px;top:22px;width:40px;text-align:center;font-size:8.6px;line-height:10px;color:#d9dde6">3,276</div>
<div class="abs" style="left:144px;top:22px;width:40px;text-align:center;font-size:8.6px;line-height:10px;color:#d9dde6">23</div>
<div class="abs" style="left:172.5px;top:22px;width:40px;text-align:center;font-size:8.6px;line-height:10px;color:#d9dde6">6</div>
<div class="abs" style="left:1238px;top:11.5px;font-size:13.5px;line-height:15px;color:#3d4a66">Find items...</div>
<div class="abs" style="left:1394px;top:12.5px;font-size:11px;font-weight:bold;line-height:13px;color:#e3e6ee">View:</div>
<div class="abs" style="left:0;top:37.3px;width:1497px;height:39px;background:linear-gradient(180deg,#0d1424 0%,#0e172b 100%);box-shadow:0 2px 3px rgba(0,0,0,.45)"></div>
<div class="abs" style="left:7.5px;top:65px;width:290.5px;height:15px;border:1px solid #13264b;border-radius:6px;background:#0d1930;z-index:0"></div>
<div class="abs" style="left:305px;top:65px;width:290.5px;height:15px;border:1px solid #13264b;border-radius:6px;background:#0d1930;z-index:0"></div>
<div class="abs" style="left:602.5px;top:65px;width:290.5px;height:15px;border:1px solid #13264b;border-radius:6px;background:#0d1930;z-index:0"></div>
<div class="abs" style="left:900px;top:65px;width:290.5px;height:15px;border:1px solid #13264b;border-radius:6px;background:#0d1930;z-index:0"></div>
<div class="abs" style="left:1197.5px;top:65px;width:290.5px;height:15px;border:1px solid #13264b;border-radius:6px;background:#0d1930;z-index:0"></div>
<div class="abs" style="left:0;top:37.3px;width:1497px;height:39px;background:linear-gradient(180deg,#0d1424 0%,#0e172b 100%)"></div>
<svg class="abs" style="left:0;top:0" width="1508" height="610" viewBox="47 455 1508 610">
<ellipse cx="63.8" cy="506.795" rx="3.9949999999999997" ry="4.4744" fill="#8d96ad"/><path d="M55.3 520.0 C55.3 511.6 72.3 511.6 72.3 520.0 Z" fill="#8d96ad"/>
<g stroke="#5b8def" stroke-width="1.7" fill="none" stroke-linecap="round" stroke-linejoin="round"><path d="M349.5 518.1 V506.1 M346.5 509.1 L349.5 505.90000000000003 L352.5 509.1"/><path d="M356.5 505.1 V517.1 M353.5 514.1 L356.5 517.3000000000001 L359.5 514.1"/></g>
<rect x="54.7" y="573" width="18.3" height="16.6" rx=".8" fill="#8d96ad"/><rect x="56.38" y="575.18" width="2" height="2" rx=".5" fill="#0d1321"/><rect x="56.38" y="580.30" width="2" height="2" rx=".5" fill="#0d1321"/><rect x="56.38" y="585.42" width="2" height="2" rx=".5" fill="#0d1321"/><rect x="60.69" y="575.18" width="2" height="2" rx=".5" fill="#0d1321"/><rect x="60.69" y="580.30" width="2" height="2" rx=".5" fill="#0d1321"/><rect x="60.69" y="585.42" width="2" height="2" rx=".5" fill="#0d1321"/><rect x="65.01" y="575.18" width="2" height="2" rx=".5" fill="#0d1321"/><rect x="65.01" y="580.30" width="2" height="2" rx=".5" fill="#0d1321"/><rect x="65.01" y="585.42" width="2" height="2" rx=".5" fill="#0d1321"/><rect x="69.32" y="575.18" width="2" height="2" rx=".5" fill="#0d1321"/><rect x="69.32" y="580.30" width="2" height="2" rx=".5" fill="#0d1321"/><rect x="69.32" y="585.42" width="2" height="2" rx=".5" fill="#0d1321"/>
<g stroke="#5b8def" stroke-width="1.7" fill="none" stroke-linecap="round" stroke-linejoin="round"><path d="M367 587.9 V575.9 M364 578.9 L367 575.6999999999999 L370 578.9"/><path d="M374 574.9 V586.9 M371 583.9 L374 587.1 L377 583.9"/></g>
<path d="M63.5 863.0 C56.7 859.7 55 854.75 55.68 849.14 C58.4 848.975 60.1 847.82 61.12 846.5 L65.88 846.5 C66.9 847.82 68.6 848.975 71.32 849.14 C72 854.75 70.3 859.7 63.5 863.0 Z" fill="none" stroke="#8d96ad" stroke-width="1.4"/><path d="M57.04 856.73 L64.35 851.12 L65.53999999999999 848.15 L68.6 848.48 L66.9 851.45 L69.62 855.575 L66.9 856.4 L65.2 853.43 L58.4 859.37 Z" fill="#8d96ad"/>
<g stroke="#5b8def" stroke-width="1.7" fill="none" stroke-linecap="round" stroke-linejoin="round"><path d="M222.2 861.1 V849.1 M219.2 852.1 L222.2 848.9 L225.2 852.1"/><path d="M229.2 848.1 V860.1 M226.2 857.1 L229.2 860.3000000000001 L232.2 857.1"/></g>
<path d="M1545.5 503 L1548 499 L1550.5 503 Z" fill="#13264d"/>
<rect x="1544" y="997" width="9" height="14.5" rx="4.5" fill="#15294f"/>
<path d="M1545.5 1018 L1548 1022 L1550.5 1018 Z" fill="#13264d"/>
</svg>
<div class="sec" style="left:32.3px;top:47.3px;line-height:18px;font-size:16.2px">Contacts</div>
<div class="cnt" style="left:108.5px;top:48.3px;line-height:16px;font-size:13.9px">3,276 items (showing 1,000)</div>
<div class="sec" style="left:32.3px;top:117.3px;line-height:18px;font-size:16.2px">Safety Connection Buildings</div>
<div class="cnt" style="left:247.5px;top:119px;line-height:16px">23 items</div>
<div class="sec" style="left:32.3px;top:390.3px;line-height:18px;font-size:16.2px">Factories</div>
<div class="cnt" style="left:110px;top:392.3px;line-height:16px">6 items</div>
<div class="card" style="left:7.5px;top:153.2px">Zambia Office</div>
<div class="card" style="left:305px;top:153.2px">Virginia Office</div>
<div class="card" style="left:602.5px;top:153.2px">Toronto</div>
<div class="card" style="left:900px;top:153.2px">Swaziland Office</div>
<div class="card" style="left:1197.5px;top:153.2px">Singapore Office</div>
<div class="card" style="left:7.5px;top:194.5px">Singapore</div>
<div class="card" style="left:305px;top:194.5px">Sheraton Addis</div>
<div class="card" style="left:602.5px;top:194.5px">Seattle Office</div>
<div class="card" style="left:900px;top:194.5px">San Diego Office 2</div>
<div class="card" style="left:1197.5px;top:194.5px">San Diego Office 1</div>
<div class="card" style="left:7.5px;top:235.8px">Paris Office</div>
<div class="card" style="left:305px;top:235.8px">North Campus</div>
<div class="card" style="left:602.5px;top:235.8px">New York Office</div>
<div class="card" style="left:900px;top:235.8px">New York Office</div>
<div class="card" style="left:1197.5px;top:235.8px">Nebraska Office</div>
<div class="card" style="left:7.5px;top:277.1px">Los Angeles Office</div>
<div class="card" style="left:305px;top:277.1px">London Office</div>
<div class="card" style="left:602.5px;top:277.1px">Inverness Office</div>
<div class="card" style="left:900px;top:277.1px">Houston Office</div>
<div class="card" style="left:1197.5px;top:277.1px">Chicago Office</div>
<div class="card" style="left:7.5px;top:318.4px">Chicago Office</div>
<div class="card" style="left:305px;top:318.4px">Boston Office</div>
<div class="card" style="left:602.5px;top:318.4px">Bangalore Office</div>
<div class="card f" style="left:7.5px;top:425.8px;background:linear-gradient(155deg,#1b4da3 0%,#17397c 28%,#142b59 55%,#13264f 100%);border-color:#2a62c4;box-shadow:0 0 6px rgba(40,100,210,.55)">Factory Wyandotte MI<br>MI</div>
<div class="card f" style="left:305px;top:425.8px">Factory Worcester Mass<br>MA</div>
<div class="card f" style="left:602.5px;top:425.8px">Factory Tokyo Japan<br>Immunology<br>Tokyo</div>
<div class="card f" style="left:900px;top:425.8px">Factory Phuket Thailand</div>
<div class="card f" style="left:1197.5px;top:425.8px">Factory North Chicago IL<br>IL</div>
<div class="card f" style="left:7.5px;top:499.6px;padding-top:9.3px">Factory #22<br>Widget Factory<br>Rhode Island</div>
<div class="abs" style="left:0;top:574px;width:1508px;height:36px;background:#0d1424;border-top:1px solid #12223f"></div>
<div class="abs" style="left:9px;top:582.5px;font-size:17.1px;line-height:20px;color:#e3e6ee">Panels:</div>
<svg class="abs" style="left:0;top:0" width="1508" height="610" viewBox="47 455 1508 610">
<g fill="none" stroke="#5b8def" stroke-width="2.6" stroke-linecap="butt"><path d="M127.5 1040.4 A14 14 0 0 1 141.8 1054.7"/><path d="M127.5 1046.4 A8.2 8.2 0 0 1 135.8 1054.7"/></g><circle cx="129.3" cy="1052.9" r="2.1" fill="#5b8def"/>
<rect x="160.2" y="1039.6" width="3" height="2.6" fill="#5b8def"/><rect x="165.4" y="1039.6" width="12.8" height="2.6" fill="#5b8def"/>
<rect x="160.2" y="1046.1999999999998" width="3" height="2.6" fill="#5b8def"/><rect x="165.4" y="1046.1999999999998" width="12.8" height="2.6" fill="#5b8def"/>
<rect x="160.2" y="1052.8" width="3" height="2.6" fill="#5b8def"/><rect x="165.4" y="1052.8" width="12.8" height="2.6" fill="#5b8def"/>
<path d="M195.5 1039.5 h11 q1.6 0 1.6 1.6 v7 q0 1.6 -1.6 1.6 h-6.8 l-3 2.8 v-2.8 h-1.2 q-1.6 0 -1.6 -1.6 v-7 q0 -1.6 1.6 -1.6 Z" fill="#cfd4e0"/>
<path d="M209.5 1044 h1.6 q1.5 0 1.5 1.5 v6 q0 1.5 -1.5 1.5 h-.8 v2.6 l-2.8 -2.6 h-4.8 q-1.2 0 -1.4 -1.2" fill="none" stroke="#cfd4e0" stroke-width="1.3"/>
<rect x="200.3" y="1041" width="1.5" height="4.2" fill="#0d1424"/><rect x="200.3" y="1046.2" width="1.5" height="1.5" fill="#0d1424"/>
<g fill="none" stroke="#cfd4e0" stroke-width="1.1"><circle cx="237" cy="1045.6" r="6.2"/><path d="M237 1041.6 V1045.8 L239.4 1047.6"/><path d="M228.5 1055.5 H245.8" stroke-width="1.6"/></g>
<path d="M1210 1047.6 H1244" stroke="#1b2742" stroke-width="1" stroke-dasharray="1 1.5"/>
<rect x="1246.0" y="1045.0" width="1.1" height="5" fill="#c3202f"/>
<rect x="1247.9" y="1042.0" width="1.1" height="11" fill="#c3202f"/>
<rect x="1249.8" y="1039.5" width="1.1" height="16" fill="#c3202f"/>
<rect x="1251.7" y="1038.0" width="1.1" height="19" fill="#c3202f"/>
<rect x="1253.6" y="1039.5" width="1.1" height="16" fill="#c3202f"/>
<rect x="1255.5" y="1041.5" width="1.1" height="12" fill="#c3202f"/>
<rect x="1257.4" y="1044.0" width="1.1" height="7" fill="#c3202f"/>
<g fill="none" stroke="#3c4968" stroke-width="1"><circle cx="1539.5" cy="1047.6" r="6.2"/></g>
</svg>
<div class="abs" style="left:1120.5px;top:586.5px;font-size:10.8px;line-height:13px;color:#5b8def">8d ago</div>
<div class="abs" style="left:1220.5px;top:586.5px;font-size:10.8px;line-height:13px;color:#5b8def">1d from now</div>
<div class="abs" style="left:1297px;top:586.3px;font-size:11.2px;line-height:13px;color:#e3e6ee;font-weight:bold;letter-spacing:-.25px">Fit to current:</div>
<div class="abs" style="left:1381.3px;top:585px;font-size:13.6px;line-height:16px;color:#5b8def">M</div>
<div class="abs" style="left:1408.2px;top:585px;font-size:13.6px;line-height:16px;color:#5b8def">W</div>
<div class="abs" style="left:1436.2px;top:585px;font-size:13.6px;line-height:16px;color:#5b8def">D</div>
<div class="abs" style="left:1461px;top:585px;font-size:13.6px;line-height:16px;color:#5b8def">H</div>
<div class="abs" style="left:1490.2px;top:587.6px;font-size:8.5px;line-height:10px;color:#3c4968">?</div>
</div>
<div id="rp">
<div class="abs" style="left:-0.5px;top:128.5px;width:366px;height:728.5px;background:#0c1425;border:1px solid #172a4f;border-radius:11px;box-shadow:0 3px 5px rgba(0,0,0,.55)"></div>
<div class="abs" style="left:31.5px;top:3.5px;width:308.5px;height:31.5px;border-radius:16px;background:linear-gradient(180deg,#0a1a3c,#0b1d42)"></div>
<div class="abs" style="left:60.5px;top:11px;font-size:13.6px;line-height:16px;color:#8b97b4">Search...</div>
<div class="abs" style="left:-1px;top:5.5px;width:17px;height:25.5px;border:1px solid #132a55;border-left:none;border-radius:0 5px 5px 0;background:#0a1328"></div>
<div class="acard" style="top:181.2px;height:88px;"><div class="t">Winter Weather</div><div class="m"><svg width="13" height="13" viewBox="-6.5 -6.5 13 13" style="vertical-align:-2.2px;margin-right:1.5px"><g fill="none" stroke="#77829a" stroke-width="1.15" stroke-linecap="round"><circle cx="0" cy="0" r="5.6"/><path d="M0 -3.3 V0.2 L2.2 1.8"/></g></svg>in 21h<svg width="10" height="13" viewBox="-5 -6.7 10 13" style="vertical-align:-2.4px;margin-left:10.5px;margin-right:0.5px"><path d="M0 -5.8 a4.2 4.2 0 0 1 4.2 4.2 c0 3 -4.2 7.4 -4.2 7.4 s-4.2 -4.4 -4.2 -7.4 a4.2 4.2 0 0 1 4.2 -4.2 Z" fill="none" stroke="#77829a" stroke-width="1.15"/><circle cx="0" cy="-1.6" r="1.6" fill="#77829a"/></svg>1</div><div class="l">California</div><div class="d">Winter Storm Warning</div></div>
<div class="acard" style="top:274.7px;height:88px;"><div class="t">Winter Weather</div><div class="m"><svg width="13" height="13" viewBox="-6.5 -6.5 13 13" style="vertical-align:-2.2px;margin-right:1.5px"><g fill="none" stroke="#77829a" stroke-width="1.15" stroke-linecap="round"><circle cx="0" cy="0" r="5.6"/><path d="M0 -3.3 V0.2 L2.2 1.8"/></g></svg>in 15h<svg width="10" height="13" viewBox="-5 -6.7 10 13" style="vertical-align:-2.4px;margin-left:10.5px;margin-right:0.5px"><path d="M0 -5.8 a4.2 4.2 0 0 1 4.2 4.2 c0 3 -4.2 7.4 -4.2 7.4 s-4.2 -4.4 -4.2 -7.4 a4.2 4.2 0 0 1 4.2 -4.2 Z" fill="none" stroke="#77829a" stroke-width="1.15"/><circle cx="0" cy="-1.6" r="1.6" fill="#77829a"/></svg>9</div><div class="l">Virginia, West Virginia, Maryland, District of Columbia</div><div class="d">Winter Weather Advisory</div></div>
<div class="acard" style="top:368.2px;height:104.3px;"><div class="t">Other Security</div><div class="m"><svg width="13" height="13" viewBox="-6.5 -6.5 13 13" style="vertical-align:-2.2px;margin-right:1.5px"><g fill="none" stroke="#77829a" stroke-width="1.15" stroke-linecap="round"><circle cx="0" cy="0" r="5.6"/><path d="M0 -3.3 V0.2 L2.2 1.8"/></g></svg>1h ago<svg width="10" height="13" viewBox="-5 -6.7 10 13" style="vertical-align:-2.4px;margin-left:10.5px;margin-right:0.5px"><path d="M0 -5.8 a4.2 4.2 0 0 1 4.2 4.2 c0 3 -4.2 7.4 -4.2 7.4 s-4.2 -4.4 -4.2 -7.4 a4.2 4.2 0 0 1 4.2 -4.2 Z" fill="none" stroke="#77829a" stroke-width="1.15"/><circle cx="0" cy="-1.6" r="1.6" fill="#77829a"/></svg>0</div><div class="l">Bucharest, Romania</div><div class="d">PM Ciolacu Appointed to Lead Pro-European<br>Coalition Amid Presidential Election Uncertainty</div></div>
<div class="acard" style="top:478.0px;height:88px;"><div class="t">Earthquake</div><div class="m"><svg width="13" height="13" viewBox="-6.5 -6.5 13 13" style="vertical-align:-2.2px;margin-right:1.5px"><g fill="none" stroke="#77829a" stroke-width="1.15" stroke-linecap="round"><circle cx="0" cy="0" r="5.6"/><path d="M0 -3.3 V0.2 L2.2 1.8"/></g></svg>2h ago<svg width="10" height="13" viewBox="-5 -6.7 10 13" style="vertical-align:-2.4px;margin-left:10.5px;margin-right:0.5px"><path d="M0 -5.8 a4.2 4.2 0 0 1 4.2 4.2 c0 3 -4.2 7.4 -4.2 7.4 s-4.2 -4.4 -4.2 -7.4 a4.2 4.2 0 0 1 4.2 -4.2 Z" fill="none" stroke="#77829a" stroke-width="1.15"/><circle cx="0" cy="-1.6" r="1.6" fill="#77829a"/></svg>3</div><div class="l">68 km SSE of Katsuura, Japan</div><div class="d">Magnitude 4.5 Earthquake</div></div>
<div class="acard" style="top:571.3px;height:120.6px;"><div class="t">Crime</div><div class="m"><svg width="13" height="13" viewBox="-6.5 -6.5 13 13" style="vertical-align:-2.2px;margin-right:1.5px"><g fill="none" stroke="#77829a" stroke-width="1.15" stroke-linecap="round"><circle cx="0" cy="0" r="5.6"/><path d="M0 -3.3 V0.2 L2.2 1.8"/></g></svg>2h ago<svg width="10" height="13" viewBox="-5 -6.7 10 13" style="vertical-align:-2.4px;margin-left:10.5px;margin-right:0.5px"><path d="M0 -5.8 a4.2 4.2 0 0 1 4.2 4.2 c0 3 -4.2 7.4 -4.2 7.4 s-4.2 -4.4 -4.2 -7.4 a4.2 4.2 0 0 1 4.2 -4.2 Z" fill="none" stroke="#77829a" stroke-width="1.15"/><circle cx="0" cy="-1.6" r="1.6" fill="#77829a"/></svg>1</div><div class="l">Centro, Brazil</div><div class="d">R. Paulo Silva &amp; Av. Elías Alves da Costa - Five<br>suspects were arrested following a robbery and<br>hostage situation. Event closed.</div></div>
<div class="acard" style="top:697.4px;height:88px;"><div class="t">Winter Weather</div><div class="m"><svg width="13" height="13" viewBox="-6.5 -6.5 13 13" style="vertical-align:-2.2px;margin-right:1.5px"><g fill="none" stroke="#77829a" stroke-width="1.15" stroke-linecap="round"><circle cx="0" cy="0" r="5.6"/><path d="M0 -3.3 V0.2 L2.2 1.8"/></g></svg>2h ago<svg width="10" height="13" viewBox="-5 -6.7 10 13" style="vertical-align:-2.4px;margin-left:10.5px;margin-right:0.5px"><path d="M0 -5.8 a4.2 4.2 0 0 1 4.2 4.2 c0 3 -4.2 7.4 -4.2 7.4 s-4.2 -4.4 -4.2 -7.4 a4.2 4.2 0 0 1 4.2 -4.2 Z" fill="none" stroke="#77829a" stroke-width="1.15"/><circle cx="0" cy="-1.6" r="1.6" fill="#77829a"/></svg>1</div><div class="l">Apsley - Woodview - Northern Peterborough County, H...</div><div class="d">Snowfall Warning</div></div>
<div class="acard" style="top:790.8px;height:65.70000000000005px;border-bottom:none;border-radius:7px 7px 0 0;overflow:hidden;"><div class="t">Crime</div><div class="m"><svg width="13" height="13" viewBox="-6.5 -6.5 13 13" style="vertical-align:-2.2px;margin-right:1.5px"><g fill="none" stroke="#77829a" stroke-width="1.15" stroke-linecap="round"><circle cx="0" cy="0" r="5.6"/><path d="M0 -3.3 V0.2 L2.2 1.8"/></g></svg>3h ago<svg width="10" height="13" viewBox="-5 -6.7 10 13" style="vertical-align:-2.4px;margin-left:10.5px;margin-right:0.5px"><path d="M0 -5.8 a4.2 4.2 0 0 1 4.2 4.2 c0 3 -4.2 7.4 -4.2 7.4 s-4.2 -4.4 -4.2 -7.4 a4.2 4.2 0 0 1 4.2 -4.2 Z" fill="none" stroke="#77829a" stroke-width="1.15"/><circle cx="0" cy="-1.6" r="1.6" fill="#77829a"/></svg>10</div><div class="l">Chicago, IL, United States</div><div class="d"><span style="position:relative;top:-2px">S Indianapolis Ave &amp; E 106th St - Three</span></div></div>
<svg class="abs" style="left:0;top:0" width="364" height="987" viewBox="1556 78 364 987">
<g stroke="#dfe3ec" stroke-width="1.7" fill="none"><circle cx="1606.2" cy="95.4" r="3.2"/><path d="M1604.2 98.2 L1601.8 103.6" stroke-linecap="round"/></g>
<g fill="none" stroke="#3f68b8" stroke-width="1.05"><path d="M1560.6 92.2 L1563.6 96.2 L1560.6 100.2 M1564.4 92.2 L1567.4 96.2 L1564.4 100.2"/></g>
<path d="M1905.2 93.80000000000001 L1909.8000000000002 98.4 L1905.2 103.0" fill="none" stroke="#c9cedb" stroke-width="1.35"/>
<rect x="1568" y="134.3" width="15" height="15" rx="2.6" fill="#5b8def"/><path d="M1571.6 141.9 L1574.4 144.70000000000002 L1579.6 139.10000000000002" fill="none" stroke="#0b1735" stroke-width="1.5"/>
<rect x="1568.9" y="178.70000000000002" width="13.2" height="13.2" rx="2.2" fill="none" stroke="#dfe3ec" stroke-width="1.7"/>
<rect x="1568" y="221.2" width="15" height="15" rx="2.6" fill="#5b8def"/><path d="M1571.6 228.79999999999998 L1574.4 231.6 L1579.6 226.0" fill="none" stroke="#0b1735" stroke-width="1.5"/>
<rect x="1568" y="950" width="15" height="15" rx="2.6" fill="#5b8def"/><path d="M1571.6 957.6 L1574.4 960.4 L1579.6 954.8" fill="none" stroke="#0b1735" stroke-width="1.5"/>
<rect x="1568.9" y="994.3" width="13.2" height="13.2" rx="2.2" fill="none" stroke="#dfe3ec" stroke-width="1.7"/>
<rect x="1568.9" y="1037.5" width="13.2" height="13.2" rx="2.2" fill="none" stroke="#dfe3ec" stroke-width="1.7"/>
<path d="M1905.2 137.4 L1909.8000000000002 142 L1905.2 146.6" fill="none" stroke="#c9cedb" stroke-width="1.35"/>
<path d="M1905.2 180.6 L1909.8000000000002 185.2 L1905.2 189.79999999999998" fill="none" stroke="#c9cedb" stroke-width="1.35"/>
<path d="M1905.2 953.4 L1909.8000000000002 958 L1905.2 962.6" fill="none" stroke="#c9cedb" stroke-width="1.35"/>
<path d="M1905.2 996.8 L1909.8000000000002 1001.4 L1905.2 1006.0" fill="none" stroke="#c9cedb" stroke-width="1.35"/>
<path d="M1905.2 1040.0 L1909.8000000000002 1044.6 L1905.2 1049.1999999999998" fill="none" stroke="#c9cedb" stroke-width="1.35"/>
<path d="M1902.8 225.6 L1907.4 230.4 L1912 225.6" fill="none" stroke="#d3d7e2" stroke-width="1.35"/>
<path d="M1597 133 h9.6 q2 0 2 2 v6.6 q0 2 -2 2 h-5.6 l-3.6 3 v-3 h-.4 q-2 0 -2 -2 v-6.6 q0 -2 2 -2 Z" fill="#d3d7e2"/>
<path d="M1610.2 137.6 q2 .2 2 2.2 v5 q0 2 -2 2 h-.4 v3 l-3.6 -3 h-3.4 q-1.400 0 -1.800 -1.200" fill="none" stroke="#d3d7e2" stroke-width="1.5"/>
<rect x="1600.9" y="134.8" width="1.8" height="4.6" fill="#0a0e1a"/><rect x="1600.9" y="140.4" width="1.8" height="1.7" fill="#0a0e1a"/>
<path d="M1603.8 177.6 c5 0 8.600 3 8.600 7 s-3.600 7 -8.600 7 c-1.400 0 -2.600 -.2 -3.800 -.6 l-4.600 2.200 l1.600 -3.800 c-1.200 -1.200 -1.800 -2.800 -1.800 -4.800 c0 -4 3.600 -7 8.600 -7 Z" fill="none" stroke="#d3d7e2" stroke-width="1.7"/>
<path d="M1603.8 179.6 v5.600 M1598.6 182.400 l5.200 5.400 l5.200 -5.400 M1600.400 187.800 l3.400 -2.600 l3.400 2.600" fill="none" stroke="#d3d7e2" stroke-width="1.6"/>
<circle cx="1603.6" cy="228.5" r="8.9" fill="none" stroke="#d3d7e2" stroke-width="1.3"/><rect x="1602.2" y="222.8" width="2.9" height="7.6" rx=".6" fill="#d3d7e2"/><circle cx="1603.65" cy="233" r="1.6" fill="#d3d7e2"/>
<circle cx="1749.6" cy="142" r="6.2" fill="none" stroke="#39445c" stroke-width="1"/>
<circle cx="1707.6" cy="185.2" r="6.2" fill="none" stroke="#39445c" stroke-width="1"/>
<circle cx="1681.2" cy="228.4" r="6.2" fill="none" stroke="#39445c" stroke-width="1"/>
<rect x="1856.3" y="210.5" width="37.4" height="35" rx="8" fill="#0b1222" stroke="#1d2c4d" stroke-width="1"/>
<g stroke="#d3d7e2" stroke-width="1.1" fill="none"><circle cx="1884.6" cy="215.8" r="1.9"/><path d="M1885.9 217.300 L1888.4 220.300"/></g>
<path d="M1909.8 260.5 L1912.4 256.5 L1915 260.5 Z" fill="#13264d"/>
<rect x="1908.4" y="265.5" width="8.4" height="350" rx="4.2" fill="#13254a"/>
<path d="M1909.8 922.5 L1912.4 926.5 L1915 922.5 Z" fill="#13264d"/>
<g stroke="#d8202f" stroke-width="2" stroke-linecap="butt" fill="none"><path d="M1587.60 278.80 L1587.60 288.40"/><path d="M1587.60 284.75 L1584.38 287.18" stroke-width="1.8"/><path d="M1587.60 284.75 L1590.82 287.18" stroke-width="1.8"/><path d="M1587.60 278.80 L1579.29 283.60"/><path d="M1582.45 281.78 L1578.73 280.20" stroke-width="1.8"/><path d="M1582.45 281.78 L1581.95 285.78" stroke-width="1.8"/><path d="M1587.60 278.80 L1579.29 274.00"/><path d="M1582.45 275.82 L1581.95 271.82" stroke-width="1.8"/><path d="M1582.45 275.82 L1578.73 277.40" stroke-width="1.8"/><path d="M1587.60 278.80 L1587.60 269.20"/><path d="M1587.60 272.85 L1590.82 270.42" stroke-width="1.8"/><path d="M1587.60 272.85 L1584.38 270.42" stroke-width="1.8"/><path d="M1587.60 278.80 L1595.91 274.00"/><path d="M1592.75 275.82 L1596.47 277.40" stroke-width="1.8"/><path d="M1592.75 275.82 L1593.25 271.82" stroke-width="1.8"/><path d="M1587.60 278.80 L1595.91 283.60"/><path d="M1592.75 281.78 L1593.25 285.78" stroke-width="1.8"/><path d="M1592.75 281.78 L1596.47 280.20" stroke-width="1.8"/></g>
<g stroke="#d8202f" stroke-width="2" stroke-linecap="butt" fill="none"><path d="M1587.60 372.30 L1587.60 381.90"/><path d="M1587.60 378.25 L1584.38 380.68" stroke-width="1.8"/><path d="M1587.60 378.25 L1590.82 380.68" stroke-width="1.8"/><path d="M1587.60 372.30 L1579.29 377.10"/><path d="M1582.45 375.28 L1578.73 373.70" stroke-width="1.8"/><path d="M1582.45 375.28 L1581.95 379.28" stroke-width="1.8"/><path d="M1587.60 372.30 L1579.29 367.50"/><path d="M1582.45 369.32 L1581.95 365.32" stroke-width="1.8"/><path d="M1582.45 369.32 L1578.73 370.90" stroke-width="1.8"/><path d="M1587.60 372.30 L1587.60 362.70"/><path d="M1587.60 366.35 L1590.82 363.92" stroke-width="1.8"/><path d="M1587.60 366.35 L1584.38 363.92" stroke-width="1.8"/><path d="M1587.60 372.30 L1595.91 367.50"/><path d="M1592.75 369.32 L1596.47 370.90" stroke-width="1.8"/><path d="M1592.75 369.32 L1593.25 365.32" stroke-width="1.8"/><path d="M1587.60 372.30 L1595.91 377.10"/><path d="M1592.75 375.28 L1593.25 379.28" stroke-width="1.8"/><path d="M1592.75 375.28 L1596.47 373.70" stroke-width="1.8"/></g>
<path d="M1579.6 458.8 Q1583.6 459.0 1587.6 456.6 Q1591.6 459.0 1595.6 458.8 Q1597.0 468.6 1587.6 475.20000000000005 Q1578.1999999999998 468.6 1579.6 458.8 Z" fill="#d8202f"/><path d="M1587.60 460.80 L1588.72 463.86 L1591.97 463.98 L1589.41 465.99 L1590.30 469.12 L1587.60 467.30 L1584.90 469.12 L1585.79 465.99 L1583.23 463.98 L1586.48 463.86 Z" fill="#0d162b"/>
<circle cx="1587.6" cy="575.6" r="9" fill="none" stroke="#d8202f" stroke-width=".9"/><circle cx="1587.6" cy="575.6" r="5.8" fill="none" stroke="#d8202f" stroke-width="1.3"/><circle cx="1587.6" cy="575.6" r="3" fill="#d8202f"/>
<path d="M1578.1999999999998 663.3 H1595.7999999999997 V664.3 H1596.7999999999997 V667.9 H1593.9999999999998 L1596.3999999999999 673.9 Q1596.6 674.9 1595.6 674.9 H1591.7999999999997 Q1590.9999999999998 674.9 1590.7999999999997 674.0999999999999 L1589.3999999999999 670.6999999999999 H1586.6 Q1584.7999999999997 670.6999999999999 1584.6 668.9 L1584.3999999999999 667.9 H1578.1999999999998 Z" fill="#d8202f"/><path d="M1585.7999999999997 668.0999999999999 Q1585.9999999999998 669.5 1587.1999999999998 669.5 H1588.7999999999997 L1588.3999999999999 668.0999999999999 Z" fill="#0d162b"/>
<g stroke="#d8202f" stroke-width="2" stroke-linecap="butt" fill="none"><path d="M1587.60 795.00 L1587.60 804.60"/><path d="M1587.60 800.95 L1584.38 803.38" stroke-width="1.8"/><path d="M1587.60 800.95 L1590.82 803.38" stroke-width="1.8"/><path d="M1587.60 795.00 L1579.29 799.80"/><path d="M1582.45 797.98 L1578.73 796.40" stroke-width="1.8"/><path d="M1582.45 797.98 L1581.95 801.98" stroke-width="1.8"/><path d="M1587.60 795.00 L1579.29 790.20"/><path d="M1582.45 792.02 L1581.95 788.02" stroke-width="1.8"/><path d="M1582.45 792.02 L1578.73 793.60" stroke-width="1.8"/><path d="M1587.60 795.00 L1587.60 785.40"/><path d="M1587.60 789.05 L1590.82 786.62" stroke-width="1.8"/><path d="M1587.60 789.05 L1584.38 786.62" stroke-width="1.8"/><path d="M1587.60 795.00 L1595.91 790.20"/><path d="M1592.75 792.02 L1596.47 793.60" stroke-width="1.8"/><path d="M1592.75 792.02 L1593.25 788.02" stroke-width="1.8"/><path d="M1587.60 795.00 L1595.91 799.80"/><path d="M1592.75 797.98 L1593.25 801.98" stroke-width="1.8"/><path d="M1592.75 797.98 L1596.47 796.40" stroke-width="1.8"/></g>
<path d="M1578.1999999999998 882.8 H1595.7999999999997 V883.8 H1596.7999999999997 V887.4 H1593.9999999999998 L1596.3999999999999 893.4 Q1596.6 894.4 1595.6 894.4 H1591.7999999999997 Q1590.9999999999998 894.4 1590.7999999999997 893.5999999999999 L1589.3999999999999 890.1999999999999 H1586.6 Q1584.7999999999997 890.1999999999999 1584.6 888.4 L1584.3999999999999 887.4 H1578.1999999999998 Z" fill="#d8202f"/><path d="M1585.7999999999997 887.5999999999999 Q1585.9999999999998 889.0 1587.1999999999998 889.0 H1588.7999999999997 L1588.3999999999999 887.5999999999999 Z" fill="#0d162b"/>
</svg>
<!--CARDICONS-->
<div class="abs" style="left:63.6px;top:54px;font-size:16.8px;font-weight:bold;line-height:20px;color:#e6e9f1;white-space:nowrap">Critical Events</div>
<div class="abs" style="left:63.6px;top:97.3px;font-size:16.8px;font-weight:bold;line-height:20px;color:#e6e9f1;white-space:nowrap">Incidents</div>
<div class="abs" style="left:63.6px;top:140.5px;font-size:16.8px;font-weight:bold;line-height:20px;color:#e6e9f1;white-space:nowrap">Alerts</div>
<div class="abs" style="left:38px;top:869.6px;font-size:16.8px;font-weight:bold;line-height:20px;color:#e6e9f1;white-space:nowrap">Assets</div>
<div class="abs" style="left:38px;top:913px;font-size:16.8px;font-weight:bold;line-height:20px;color:#e6e9f1;white-space:nowrap">Risk Events</div>
<div class="abs" style="left:38px;top:956.2px;font-size:16.8px;font-weight:bold;line-height:20px;color:#e6e9f1;white-space:nowrap">Context</div>
<div class="abs" style="left:188.6px;top:58.8px;width:10px;text-align:center;font-size:8.6px;line-height:10px;color:#39445c">?</div>
<div class="abs" style="left:146.6px;top:102.0px;width:10px;text-align:center;font-size:8.6px;line-height:10px;color:#39445c">?</div>
<div class="abs" style="left:120.2px;top:145.20000000000002px;width:10px;text-align:center;font-size:8.6px;line-height:10px;color:#39445c">?</div>
<div class="abs" style="left:261.5px;top:141px;font-size:13.8px;font-weight:bold;line-height:16px;color:#e6e9f1;white-space:nowrap">12 <span style="font-size:9.4px;margin-left:2px">OF</span></div>
<div class="abs" style="left:300.3px;top:140.5px;width:34px;text-align:center;font-size:15.6px;line-height:18px;color:#e6e9f1">12</div>
<div class="abs" style="left:304px;top:872.5px;width:36.6px;text-align:right;font-size:11.4px;font-weight:bold;line-height:13px;color:#e6e9f1">3,305</div>
</div>
</div>
<svg class="abs" style="left:0;top:0;z-index:50" width="1920" height="1080" viewBox="0 0 1920 1080"><rect x="40.8" y="867.2" width="318" height="93.6" fill="none" stroke="#b8182a" stroke-width="10"/><g fill="none" stroke="#b8182a" stroke-width="13.4" stroke-linecap="round" stroke-linejoin="round"><path d="M586.7 827.5 C575 880 520 915 432 915"/><path d="M450.5 880 L417.5 914.6 L450.5 947.5"/></g></svg>
</body></html>
